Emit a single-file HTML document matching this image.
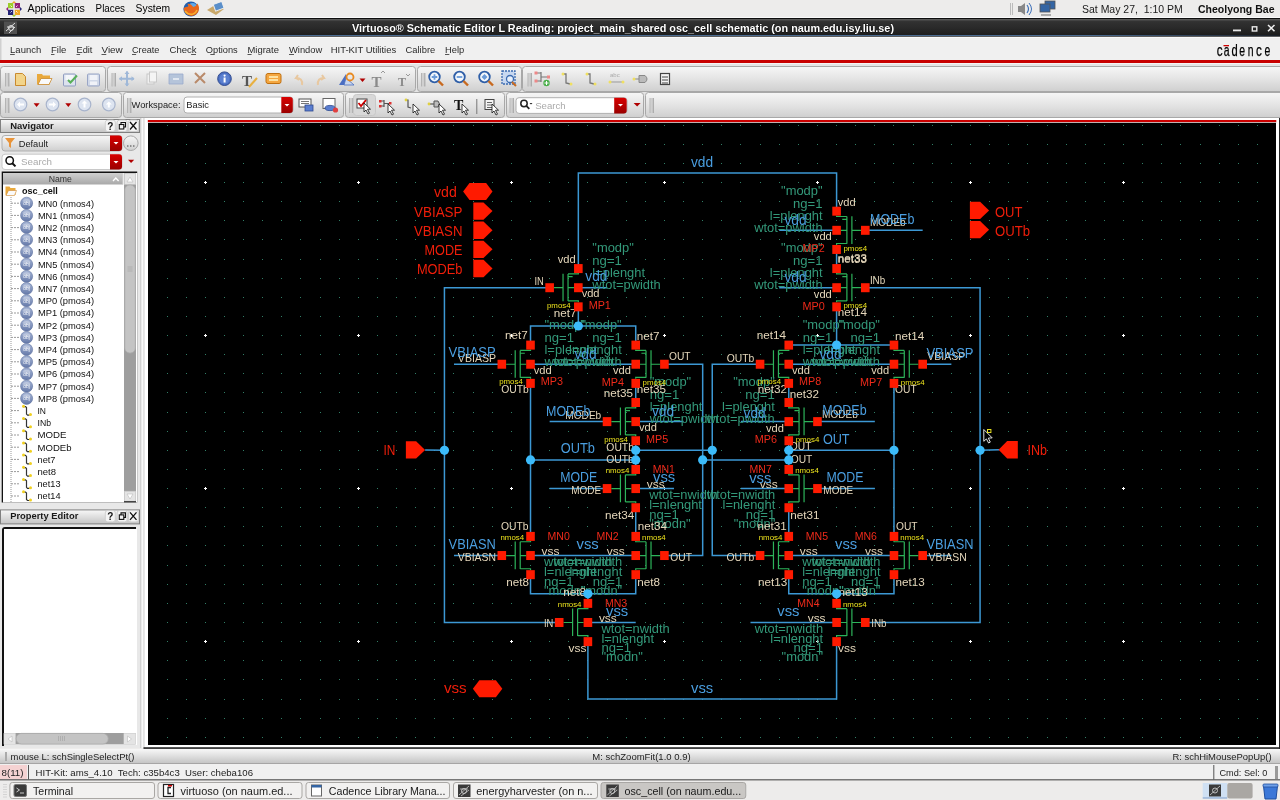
<!DOCTYPE html>
<html><head><meta charset="utf-8"><title>Virtuoso Schematic Editor</title>
<style>html,body{margin:0;padding:0;background:#EDECEB;overflow:hidden}svg{display:block;will-change:transform}text{font-family:"Liberation Sans",sans-serif}</style></head>
<body><svg width="1280" height="800" viewBox="0 0 1280 800">
<rect x="0" y="0" width="1280" height="18" fill="#EDECEB" />
<rect x="0" y="17" width="1280" height="1" fill="#FAFAFA" />
<g transform="translate(14,9)"><path d="M0,-8 l2.2,2.2 h-4.4z" fill="#EFA724"/><path d="M0,8 l2.2,-2.2 h-4.4z" fill="#9CCD2A"/><path d="M-8,0 l2.2,2.2 v-4.4z" fill="#932279"/><path d="M8,0 l-2.2,2.2 v-4.4z" fill="#262577"/><rect x="-6" y="-6" width="5.2" height="5.2" fill="#9CCD2A"/><rect x="0.8" y="-6" width="5.2" height="5.2" fill="#932279"/><rect x="0.8" y="0.8" width="5.2" height="5.2" fill="#EFA724"/><rect x="-6" y="0.8" width="5.2" height="5.2" fill="#262577"/><path d="M-3.5,-3.5 l1.5,1.5 M3.5,-3.5 l-1.5,1.5 M3.5,3.5 l-1.5,-1.5 M-3.5,3.5 l1.5,-1.5" stroke="#fff" stroke-width="0.8"/></g>
<text x="27.6" y="12" font-size="10" fill="#000" textLength="57.30" lengthAdjust="spacingAndGlyphs"  style="white-space:pre">Applications</text>
<text x="95.6" y="12" font-size="10" fill="#000" textLength="29.40" lengthAdjust="spacingAndGlyphs"  style="white-space:pre">Places</text>
<text x="135.6" y="12" font-size="10" fill="#000" textLength="34.40" lengthAdjust="spacingAndGlyphs"  style="white-space:pre">System</text>
<circle cx="191" cy="9" r="7.6" fill="#1F5FB0"/><circle cx="192.5" cy="7.5" r="4.5" fill="#5FA8E8"/><path d="M183.8,8 a7.6,7.6 0 1 0 13.5,-4.5 q-1,3 -4,3.5 q-3,-4 -6,-3 q1.5,1 1,2.5 q-3,0 -4.5,1.5z" fill="#E8661A"/><path d="M185,11 q3,4 8,3 q3,-1 4,-4" stroke="#F8B030" stroke-width="1.5" fill="none"/>
<path d="M207,10 L215,5 L224,9 L216,15 Z" fill="#C9A86A"/><rect x="214" y="3" width="9" height="7" fill="#5B8FC9" stroke="#eee" stroke-width="1" transform="rotate(-20 218 6)"/>
<rect x="1010" y="3" width="1" height="12" fill="#bbb"/><rect x="1012" y="3" width="1" height="12" fill="#bbb"/>
<path d="M1018,6 h3 l4,-3 v12 l-4,-3 h-3z" fill="#888"/><path d="M1027,5 q3,4 0,8" stroke="#3D6FB8" fill="none" stroke-width="1.2"/><path d="M1029,3 q5,6 0,12" stroke="#3D6FB8" fill="none" stroke-width="1"/>
<rect x="1045" y="1" width="10" height="8" fill="#3465A4" stroke="#555" stroke-width="0.8"/><rect x="1040" y="4" width="10" height="8" fill="#3465A4" stroke="#555" stroke-width="0.8"/><rect x="1041" y="14" width="10" height="2" fill="#aaa"/>
<text x="1082" y="12.5" font-size="10" fill="#1a1a1a" textLength="100.70" lengthAdjust="spacingAndGlyphs"  style="white-space:pre">Sat May 27,  1:10 PM</text>
<text x="1198" y="12.5" font-size="10" fill="#111" font-weight="bold" textLength="76.50" lengthAdjust="spacingAndGlyphs"  style="white-space:pre">Cheolyong Bae</text>
<defs><linearGradient id="gTitle" x1="0" y1="0" x2="0" y2="1"><stop offset="0" stop-color="#343434"/><stop offset="0.5" stop-color="#2a2a2a"/><stop offset="1" stop-color="#1c1c1c"/></linearGradient><linearGradient id="gBlue" x1="0" y1="0" x2="1" y2="0"><stop offset="0" stop-color="#1a1f28"/><stop offset="0.15" stop-color="#4A6B91"/><stop offset="0.85" stop-color="#4A6B91"/><stop offset="1" stop-color="#1a1f28"/></linearGradient></defs>
<rect x="0" y="18" width="1280" height="1.5" fill="#0e0e0e" />
<rect x="0" y="19.5" width="1280" height="16" fill="url(#gTitle)" />
<rect x="0" y="20.3" width="1280" height="0.8" fill="#4a4a4a" />
<rect x="0" y="35" width="1280" height="1" fill="url(#gBlue)" />
<rect x="0" y="36" width="1280" height="0.8" fill="#0a0a0a" />
<rect x="0" y="36.8" width="1280" height="1.5" fill="#FAFAFA" />
<rect x="4" y="21.5" width="13" height="12.5" fill="#505050" />
<path d="M6,31 L15,23 M7,27 l7,0 M9,33 l6,-6" stroke="#ddd" stroke-width="1" fill="none"/><circle cx="11" cy="28" r="2.5" stroke="#ddd" fill="none" stroke-width="1"/>
<text x="352" y="32" font-size="11" fill="#FFFFFF" font-weight="bold" textLength="542.00" lengthAdjust="spacingAndGlyphs" stroke="#000" stroke-width="0.6" paint-order="stroke" style="white-space:pre">Virtuoso® Schematic Editor L Reading: project_main_shared osc_cell schematic (on naum.edu.isy.liu.se)</text>
<rect x="1233" y="29.5" width="8" height="1.8" fill="#e8e8e8" />
<rect x="1252.3" y="26.8" width="4.5" height="4.2" fill="none" stroke="#e8e8e8" stroke-width="1.4"/>
<path d="M1268,25 l6.5,6.2 M1274.5,25 l-6.5,6.2" stroke="#f0f0f0" stroke-width="1.5"/>
<rect x="0" y="38.3" width="1280" height="21.7" fill="#F0F0F0" />
<rect x="0" y="38.3" width="1.5" height="21.7" fill="#D0D0D0" />
<text x="10.1" y="52.7" font-size="9.5" fill="#2a2a2a" textLength="31.10" lengthAdjust="spacingAndGlyphs"  style="white-space:pre">Launch</text>
<text x="51" y="52.7" font-size="9.5" fill="#2a2a2a" textLength="15.40" lengthAdjust="spacingAndGlyphs"  style="white-space:pre">File</text>
<text x="76.5" y="52.7" font-size="9.5" fill="#2a2a2a" textLength="15.90" lengthAdjust="spacingAndGlyphs"  style="white-space:pre">Edit</text>
<text x="101.5" y="52.7" font-size="9.5" fill="#2a2a2a" textLength="21.20" lengthAdjust="spacingAndGlyphs"  style="white-space:pre">View</text>
<text x="132" y="52.7" font-size="9.5" fill="#2a2a2a" textLength="27.40" lengthAdjust="spacingAndGlyphs"  style="white-space:pre">Create</text>
<text x="169.5" y="52.7" font-size="9.5" fill="#2a2a2a" textLength="27.00" lengthAdjust="spacingAndGlyphs"  style="white-space:pre">Check</text>
<text x="205.8" y="52.7" font-size="9.5" fill="#2a2a2a" textLength="31.90" lengthAdjust="spacingAndGlyphs"  style="white-space:pre">Options</text>
<text x="247.5" y="52.7" font-size="9.5" fill="#2a2a2a" textLength="31.40" lengthAdjust="spacingAndGlyphs"  style="white-space:pre">Migrate</text>
<text x="289" y="52.7" font-size="9.5" fill="#2a2a2a" textLength="33.20" lengthAdjust="spacingAndGlyphs"  style="white-space:pre">Window</text>
<text x="330.7" y="52.7" font-size="9.5" fill="#2a2a2a" textLength="65.50" lengthAdjust="spacingAndGlyphs"  style="white-space:pre">HIT-KIT Utilities</text>
<text x="405.6" y="52.7" font-size="9.5" fill="#2a2a2a" textLength="29.60" lengthAdjust="spacingAndGlyphs"  style="white-space:pre">Calibre</text>
<text x="445" y="52.7" font-size="9.5" fill="#2a2a2a" textLength="19.20" lengthAdjust="spacingAndGlyphs"  style="white-space:pre">Help</text>
<rect x="10.1" y="54" width="4.665" height="1" fill="#555" />
<rect x="51.0" y="54" width="3.465000000000001" height="1" fill="#555" />
<rect x="76.5" y="54" width="3.5775000000000015" height="1" fill="#555" />
<rect x="101.5" y="54" width="4.7700000000000005" height="1" fill="#555" />
<rect x="132.0" y="54" width="4.11" height="1" fill="#555" />
<rect x="191.1" y="54" width="4.86" height="1" fill="#555" />
<rect x="210.35714285714286" y="54" width="4.101428571428569" height="1" fill="#555" />
<rect x="247.5" y="54" width="4.037142857142854" height="1" fill="#555" />
<rect x="289.0" y="54" width="4.979999999999999" height="1" fill="#555" />
<rect x="445.0" y="54" width="4.319999999999998" height="1" fill="#555" />
<text x="1216.7" y="55.8" font-size="16" fill="#000" textLength="5.80" lengthAdjust="spacingAndGlyphs" stroke="#000" stroke-width="0.25" style="white-space:pre">c</text>
<text x="1223.8" y="55.8" font-size="16" fill="#000" textLength="5.80" lengthAdjust="spacingAndGlyphs" stroke="#000" stroke-width="0.25" style="white-space:pre">a</text>
<text x="1231.5" y="55.8" font-size="16" fill="#000" textLength="6.20" lengthAdjust="spacingAndGlyphs" stroke="#000" stroke-width="0.25" style="white-space:pre">d</text>
<text x="1239.2" y="55.8" font-size="16" fill="#000" textLength="5.80" lengthAdjust="spacingAndGlyphs" stroke="#000" stroke-width="0.25" style="white-space:pre">e</text>
<text x="1247.7" y="55.8" font-size="16" fill="#000" textLength="5.80" lengthAdjust="spacingAndGlyphs" stroke="#000" stroke-width="0.25" style="white-space:pre">n</text>
<text x="1256" y="55.8" font-size="16" fill="#000" textLength="5.80" lengthAdjust="spacingAndGlyphs" stroke="#000" stroke-width="0.25" style="white-space:pre">c</text>
<text x="1264.6" y="55.8" font-size="16" fill="#000" textLength="5.80" lengthAdjust="spacingAndGlyphs" stroke="#000" stroke-width="0.25" style="white-space:pre">e</text>
<rect x="1223.5" y="45" width="5.5" height="1.3" fill="#C00" />
<rect x="0" y="60" width="1280" height="3" fill="#C80000" />
<rect x="0" y="63" width="1280" height="1" fill="#F4F4F4" />
<defs><linearGradient id="gTB" x1="0" y1="0" x2="0" y2="1"><stop offset="0" stop-color="#F6F6F6"/><stop offset="0.45" stop-color="#E6E6E6"/><stop offset="1" stop-color="#CFCFCF"/></linearGradient><linearGradient id="gHdr" x1="0" y1="0" x2="0" y2="1"><stop offset="0" stop-color="#F8F8F8"/><stop offset="1" stop-color="#C4C4C4"/></linearGradient><linearGradient id="gGray" x1="0" y1="0" x2="0" y2="1"><stop offset="0" stop-color="#CFCFCF"/><stop offset="1" stop-color="#A9A9A9"/></linearGradient><linearGradient id="gRed" x1="0" y1="0" x2="0" y2="1"><stop offset="0" stop-color="#D80000"/><stop offset="1" stop-color="#9A0000"/></linearGradient><linearGradient id="gBall" x1="0" y1="0" x2="0" y2="1"><stop offset="0" stop-color="#A9B8D8"/><stop offset="1" stop-color="#6478A8"/></linearGradient></defs>
<rect x="0" y="64" width="1280" height="55" fill="#E4E4E4" />
<rect x="0.5" y="66.5" width="105" height="25" rx="3" fill="url(#gTB)" stroke="#A8A8A8" stroke-width="1"/>
<rect x="107.5" y="66.5" width="308" height="25" rx="3" fill="url(#gTB)" stroke="#A8A8A8" stroke-width="1"/>
<rect x="417.5" y="66.5" width="104" height="25" rx="3" fill="url(#gTB)" stroke="#A8A8A8" stroke-width="1"/>
<rect x="522.5" y="66.5" width="767" height="25" rx="3" fill="url(#gTB)" stroke="#A8A8A8" stroke-width="1"/>
<rect x="0.5" y="92.5" width="121" height="25" rx="3" fill="url(#gTB)" stroke="#A8A8A8" stroke-width="1"/>
<rect x="123.5" y="92.5" width="220" height="25" rx="3" fill="url(#gTB)" stroke="#A8A8A8" stroke-width="1"/>
<rect x="345.5" y="92.5" width="159" height="25" rx="3" fill="url(#gTB)" stroke="#A8A8A8" stroke-width="1"/>
<rect x="506.5" y="92.5" width="137" height="25" rx="3" fill="url(#gTB)" stroke="#A8A8A8" stroke-width="1"/>
<rect x="645.5" y="92.5" width="644" height="25" rx="3" fill="url(#gTB)" stroke="#A8A8A8" stroke-width="1"/>
<rect x="5" y="73" width="1.2" height="13.5" fill="#B4B4B4" /><rect x="6.2" y="73" width="2" height="13.5" fill="#CFCFCF" /><rect x="8.2" y="73" width="1.2" height="13.5" fill="#A8A8A8" />
<rect x="111.5" y="73" width="1.2" height="13.5" fill="#B4B4B4" /><rect x="112.7" y="73" width="2" height="13.5" fill="#CFCFCF" /><rect x="114.7" y="73" width="1.2" height="13.5" fill="#A8A8A8" />
<rect x="421" y="73" width="1.2" height="13.5" fill="#B4B4B4" /><rect x="422.2" y="73" width="2" height="13.5" fill="#CFCFCF" /><rect x="424.2" y="73" width="1.2" height="13.5" fill="#A8A8A8" />
<rect x="527.5" y="73" width="1.2" height="13.5" fill="#B4B4B4" /><rect x="528.7" y="73" width="2" height="13.5" fill="#CFCFCF" /><rect x="530.7" y="73" width="1.2" height="13.5" fill="#A8A8A8" />
<rect x="5" y="98" width="1.2" height="15" fill="#B4B4B4" /><rect x="6.2" y="98" width="2" height="15" fill="#CFCFCF" /><rect x="8.2" y="98" width="1.2" height="15" fill="#A8A8A8" />
<rect x="127" y="98" width="1.2" height="15" fill="#B4B4B4" /><rect x="128.2" y="98" width="2" height="15" fill="#CFCFCF" /><rect x="130.2" y="98" width="1.2" height="15" fill="#A8A8A8" />
<rect x="349" y="98" width="1.2" height="15" fill="#B4B4B4" /><rect x="350.2" y="98" width="2" height="15" fill="#CFCFCF" /><rect x="352.2" y="98" width="1.2" height="15" fill="#A8A8A8" />
<rect x="509.5" y="98" width="1.2" height="15" fill="#B4B4B4" /><rect x="510.7" y="98" width="2" height="15" fill="#CFCFCF" /><rect x="512.7" y="98" width="1.2" height="15" fill="#A8A8A8" />
<rect x="649.5" y="98" width="1.2" height="15" fill="#B4B4B4" /><rect x="650.7" y="98" width="2" height="15" fill="#CFCFCF" /><rect x="652.7" y="98" width="1.2" height="15" fill="#A8A8A8" />
<path d="M15.5,73.5 h7 l3,3 v9 h-10z" fill="#F2D48A" stroke="#C98A2E" stroke-width="1"/>
<path d="M37,74 h5 l1,1.5 h7 v9 h-13z" fill="#E9A93C"/><path d="M38,84.5 l3,-6 h11 l-3,6z" fill="#FAFAFA" stroke="#C98A2E" stroke-width="0.8"/>
<rect x="63.5" y="74" width="12" height="12" rx="1" fill="#DCE2EE" stroke="#8F9CC0"/><rect x="65.5" y="75" width="8" height="5" fill="#F4F6FA"/><path d="M68,80 l2.5,2.5 l6.5,-7" stroke="#58B058" stroke-width="2" fill="none"/>
<rect x="87.5" y="74" width="12" height="12" rx="1" fill="#D0D8E8" stroke="#9AA6C6"/><rect x="89.5" y="75" width="8" height="5" fill="#F0F2F8"/><rect x="90" y="81.5" width="7" height="3.5" fill="#F0F2F8"/>
<path d="M127,71.5 v14.5 M119.5,78.7 h14.5" stroke="#9FB8D8" stroke-width="2"/><path d="M127,71 l-2.5,3 h5z M127,86.5 l-2.5,-3 h5z M119,78.7 l3,-2.5 v5z M134.5,78.7 l-3,-2.5 v5z" fill="#9FB8D8"/>
<rect x="147" y="74" width="7" height="10" fill="#F0F0F0" stroke="#C8C8C8"/><rect x="149.5" y="72" width="7" height="10" fill="#F4F4F4" stroke="#C8C8C8"/>
<path d="M169,74 h14 v10 h-14z" fill="#B5C4DA" stroke="#9AAACC" stroke-width="0.8"/><path d="M173,79 h6" stroke="#fff" stroke-width="1.2"/>
<path d="M195,73 l10,10 M205,73 l-10,10" stroke="#B98A6A" stroke-width="2"/>
<circle cx="224.5" cy="78.7" r="6.8" fill="#4A6EC2" stroke="#2F4A90"/><circle cx="224.5" cy="78.7" r="5" fill="#5C80D0"/><rect x="223.6" y="77.5" width="2" height="5" fill="#fff"/><circle cx="224.6" cy="75.6" r="1.1" fill="#fff"/>
<text x="242" y="86" font-size="15" fill="#555" font-weight="bold"  style="white-space:pre;font-family:&quot;Liberation Serif&quot;">T</text>
<path d="M249,87 l8,-9" stroke="#E8B040" stroke-width="2"/>
<rect x="266" y="73.5" width="15" height="10" rx="2" fill="#F4A640" stroke="#C07010"/><path d="M269,77 h9 M278,80 h-9" stroke="#FFF5C0" stroke-width="1.3"/>
<path d="M302,85 q1,-7 -6,-7 l2,-3 M296,78 l3,2" stroke="#E8C8A0" stroke-width="2" fill="none"/>
<path d="M318,85 q-1,-7 6,-7 l-2,-3 M324,78 l-3,2" stroke="#E8C8A0" stroke-width="2" fill="none"/>
<path d="M339,85 l7,-11 v11z" fill="#4A6EC2"/><path d="M344,85 l10,-0 l-8,-7z" fill="#C9D6EE" stroke="#4A6EC2" stroke-width="0.8"/><circle cx="350" cy="77" r="3.5" fill="none" stroke="#E88A20" stroke-width="1.8"/>
<path d="M359.5,78.5 h6 l-3,3.5z" fill="#B00000"/>
<text x="371.5" y="86.5" font-size="15" fill="#8A8A8A" font-weight="bold"  style="white-space:pre;font-family:&quot;Liberation Serif&quot;">T</text>
<path d="M381,73 l2,-2 l2,2" stroke="#999" fill="none"/>
<text x="398" y="86" font-size="12" fill="#8A8A8A" font-weight="bold"  style="white-space:pre;font-family:&quot;Liberation Serif&quot;">T</text>
<path d="M406,74 l2,2 l2,-2" stroke="#999" fill="none"/>
<circle cx="434.5" cy="77" r="5.3" fill="#F4F8FC" stroke="#2F5FA8" stroke-width="1.8"/><path d="M438.5,81 l4.5,4.5" stroke="#C86A20" stroke-width="2.4"/>
<path d="M431.7,77 h5.6 M434.5,74.2 v5.6" stroke="#6A9AD8" stroke-width="1.8"/>
<circle cx="459.5" cy="77" r="5.3" fill="#F4F8FC" stroke="#2F5FA8" stroke-width="1.8"/><path d="M463.5,81 l4.5,4.5" stroke="#C86A20" stroke-width="2.4"/>
<path d="M456.7,77 h5.6" stroke="#6A9AD8" stroke-width="1.8"/>
<circle cx="484.5" cy="77" r="5.3" fill="#F4F8FC" stroke="#2F5FA8" stroke-width="1.8"/><path d="M488.5,81 l4.5,4.5" stroke="#C86A20" stroke-width="2.4"/>
<path d="M484.5,74 l3,3 l-3,3 l-3,-3z" fill="#6A9AD8"/>
<rect x="502" y="71" width="13" height="13" fill="#C8D8F0" stroke="#3A6AB0" stroke-width="1.3" stroke-dasharray="2,1"/><circle cx="510" cy="79" r="3.5" fill="#E8F0FA" stroke="#3A6AB0" stroke-width="1.3"/><path d="M512,82 l4,4" stroke="#C86A20" stroke-width="2"/>
<path d="M535,73 h6 M535,81 h6 M541,72 v10 M541,77 h7" stroke="#777" stroke-width="1.2" fill="none"/><rect x="534.5" y="71.5" width="3" height="3" fill="#E88"/><rect x="534.5" y="79.5" width="3" height="3" fill="#E88"/><rect x="547" y="75.5" width="3" height="3" fill="#E88"/><circle cx="546.5" cy="83" r="3.2" fill="#4CB04C"/><path d="M546.5,81 v4 M544.5,83 h4" stroke="#fff" stroke-width="1"/>
<path d="M563,74 h3 v9 l4,1" stroke="#777" stroke-width="1.3" fill="none"/><circle cx="563" cy="74" r="1.5" fill="#F0E060"/><circle cx="571" cy="84" r="1.5" fill="#F0E060"/>
<path d="M587,74 h3 v9 l4,1" stroke="#777" stroke-width="1.3" fill="none"/><circle cx="587" cy="74" r="1.5" fill="#F0E060"/><circle cx="595" cy="84" r="1.5" fill="#F0E060"/>
<text x="610" y="77" font-size="6" fill="#AAA"  style="white-space:pre">abc</text>
<path d="M610,82 h13" stroke="#999" stroke-width="1"/><circle cx="610" cy="82" r="1.5" fill="#F0E060"/><circle cx="623" cy="82" r="1.5" fill="#F0E060"/>
<path d="M634,79 h5 M639,75.5 h6 q4,3.5 0,7 h-6z" stroke="#888" stroke-width="1" fill="#BBB"/><circle cx="634" cy="79" r="1.5" fill="#F0E060"/>
<rect x="660.5" y="73.5" width="9" height="11" fill="#F4F4F4" stroke="#444" stroke-width="1.2"/><path d="M662,77 h6 M662,80 h6 M662,83 h6" stroke="#444" stroke-width="1"/>
<circle cx="20.5" cy="104.5" r="6.3" fill="#DDE4F0" stroke="#A8B4CC" stroke-width="1.2"/>
<circle cx="52.5" cy="104.5" r="6.3" fill="#DDE4F0" stroke="#A8B4CC" stroke-width="1.2"/>
<circle cx="84.5" cy="104.5" r="6.3" fill="#DDE4F0" stroke="#A8B4CC" stroke-width="1.2"/>
<circle cx="108.8" cy="104.5" r="6.3" fill="#DDE4F0" stroke="#A8B4CC" stroke-width="1.2"/>
<path d="M17,104.5 l3,-3 v2 h4 v2 h-4 v2z" fill="#fff"/><path d="M56,104.5 l-3,-3 v2 h-4 v2 h4 v2z" fill="#fff"/><path d="M84.5,100.5 l3,3 h-2 v4 h-2 v-4 h-2z" fill="#fff"/><path d="M108.8,101.5 l3,3 h-2 v3 h-2 v-3 h-2z" fill="#fff"/>
<path d="M33.6,103.3 h6 l-3,3.6z" fill="#B00000"/>
<path d="M65.3,103.3 h6 l-3,3.6z" fill="#B00000"/>
<text x="131.6" y="108" font-size="9.5" fill="#222" textLength="48.90" lengthAdjust="spacingAndGlyphs"  style="white-space:pre">Workspace:</text>
<rect x="184" y="97" width="109" height="16" rx="3" fill="#fff" stroke="#B0B0B0"/>
<path d="M281.3,97 h8.5 a3,3 0 0 1 3,3 v10 a3,3 0 0 1 -3,3 h-8.5z" fill="url(#gRed)"/><path d="M284.5,104 h5 l-2.5,2.5z" fill="#fff"/>
<text x="186.3" y="108" font-size="9.5" fill="#222" textLength="22.70" lengthAdjust="spacingAndGlyphs"  style="white-space:pre">Basic</text>
<rect x="299" y="99" width="12" height="8" fill="#fff" stroke="#555" stroke-width="1"/><path d="M301,101.5 h8 M301,103.5 h8" stroke="#555" stroke-width="0.8"/><rect x="305" y="105" width="8" height="6" fill="#5A7ED0" stroke="#2F4A90" stroke-width="0.8"/>
<rect x="323" y="98.5" width="12" height="10" fill="#fff" stroke="#666" stroke-width="1"/><ellipse cx="330" cy="108" rx="5" ry="2.6" fill="#5A7ED0" stroke="#2F4A90" stroke-width="0.8"/><circle cx="335.5" cy="110" r="2.6" fill="#E04040"/>
<rect x="353.5" y="94.5" width="22" height="21" rx="3" fill="#D8D8D8" stroke="#C8C8C8"/>
<rect x="357" y="99" width="10" height="9" fill="#fff" stroke="#444" stroke-width="1"/><path d="M358.5,103 l2.5,3 l5,-6" stroke="#D00000" stroke-width="1.8" fill="none"/>
<path d="M364,103 v9 l2,-2 l2,4 l1.5,-0.8 l-2,-4 h3z" fill="#fff" stroke="#111" stroke-width="0.8"/>
<path d="M380,101 h4 M380,106 h4 M384,100 v7 M384,103.5 h5" stroke="#555" stroke-width="1.2" fill="none"/><rect x="379" y="100" width="2.5" height="2.5" fill="#D33"/><rect x="379" y="105" width="2.5" height="2.5" fill="#D33"/><rect x="389" y="102" width="2.5" height="2.5" fill="#D33"/><path d="M388,104 v9 l2,-2 l2,4 l1.5,-0.8 l-2,-4 h3z" fill="#fff" stroke="#111" stroke-width="0.8"/>
<path d="M406,100 h2 v7 l3,1" stroke="#555" stroke-width="1.2" fill="none"/><circle cx="406" cy="100" r="1.4" fill="#E0D040"/><path d="M413,104 v9 l2,-2 l2,4 l1.5,-0.8 l-2,-4 h3z" fill="#fff" stroke="#111" stroke-width="0.8"/>
<path d="M429,104 h5" stroke="#555" stroke-width="1.2"/><circle cx="429" cy="104" r="1.4" fill="#E0D040"/><path d="M434,101 h4 q3,3 0,6 h-4z" fill="#bbb" stroke="#555" stroke-width="1"/><path d="M439,104 v9 l2,-2 l2,4 l1.5,-0.8 l-2,-4 h3z" fill="#fff" stroke="#111" stroke-width="0.8"/>
<text x="454" y="110" font-size="14" fill="#111" font-weight="bold"  style="white-space:pre;font-family:&quot;Liberation Serif&quot;">T</text><path d="M462,104 v9 l2,-2 l2,4 l1.5,-0.8 l-2,-4 h3z" fill="#fff" stroke="#111" stroke-width="0.8"/>
<rect x="476.3" y="99" width="1" height="15" fill="#777" />
<rect x="485" y="99.5" width="9" height="10" fill="#F4F4F4" stroke="#444" stroke-width="1"/><path d="M487,102.5 h5 M487,105 h5 M487,107.5 h5" stroke="#444" stroke-width="0.8"/><path d="M492,104 v9 l2,-2 l2,4 l1.5,-0.8 l-2,-4 h3z" fill="#fff" stroke="#111" stroke-width="0.8"/>
<rect x="516" y="97.7" width="111" height="15.7" rx="3" fill="#fff" stroke="#B0B0B0"/>
<path d="M614.2,97.7 h9.5 a3,3 0 0 1 3,3 v9.7 a3,3 0 0 1 -3,3 h-9.5z" fill="url(#gRed)"/><path d="M618,104 h5 l-2.5,2.5z" fill="#fff"/>
<circle cx="524" cy="103.5" r="3.2" fill="none" stroke="#222" stroke-width="1.5"/><path d="M526.3,105.8 l3,3" stroke="#222" stroke-width="1.8"/><path d="M529.5,103 h3 l-1.5,1.5z" fill="#222"/>
<text x="535.2" y="108.5" font-size="9.5" fill="#AAAAAA" textLength="30.50" lengthAdjust="spacingAndGlyphs"  style="white-space:pre">Search</text>
<path d="M633.6,103 h7 l-3.5,3.5z" fill="#B00000"/>
<rect x="0" y="118" width="144" height="630" fill="#E8E8E8" />
<rect x="140" y="118" width="1" height="630" fill="#D0D0D0" />
<rect x="142" y="118" width="1" height="630" fill="#F8F8F8" />
<rect x="0.5" y="119.5" width="139" height="13" fill="url(#gHdr)" stroke="#808080"/>
<text x="10.2" y="128.8" font-size="9.5" fill="#1a1a1a" font-weight="bold" textLength="43.60" lengthAdjust="spacingAndGlyphs"  style="white-space:pre">Navigator</text>
<rect x="105.3" y="120" width="10" height="11.5" rx="2.5" fill="#F4F4F4" stroke="#C8C8C8" stroke-width="0.8"/>
<rect x="117.2" y="120" width="10" height="11.5" rx="2.5" fill="#F4F4F4" stroke="#C8C8C8" stroke-width="0.8"/>
<rect x="128.5" y="120" width="10" height="11.5" rx="2.5" fill="#F4F4F4" stroke="#C8C8C8" stroke-width="0.8"/>
<text x="107.2" y="129.5" font-size="10" fill="#111" font-weight="bold"  style="white-space:pre">?</text>
<rect x="119.3" y="124.5" width="4.5" height="4.5" fill="none" stroke="#111" stroke-width="1.1"/><path d="M121,124.5 v-2 h4.5 v4.5 h-1.7" stroke="#111" stroke-width="1.1" fill="none"/>
<path d="M130,122 l6.5,7.5 M136.5,122 l-6.5,7.5" stroke="#111" stroke-width="1.3"/>
<rect x="2" y="135.5" width="120" height="15.5" rx="3" fill="url(#gTB)" stroke="#B0B0B0"/>
<path d="M110,135.5 h9 a3,3 0 0 1 3,3 v9.5 a3,3 0 0 1 -3,3 h-9z" fill="url(#gRed)"/><path d="M113.5,142 h5 l-2.5,2.5z" fill="#fff"/>
<path d="M5,138 h10 l-4,5 v5 l-2,-1.5 v-3.5z" fill="#E8943A"/>
<text x="18.7" y="146.5" font-size="9.5" fill="#222" textLength="29.40" lengthAdjust="spacingAndGlyphs"  style="white-space:pre">Default</text>
<circle cx="130.8" cy="143.2" r="7.3" fill="url(#gTB)" stroke="#A8A8A8"/>
<circle cx="127.8" cy="146" r="0.8" fill="#555"/><circle cx="130.8" cy="146" r="0.8" fill="#555"/><circle cx="133.8" cy="146" r="0.8" fill="#555"/>
<rect x="2" y="154.2" width="120" height="15.3" rx="3" fill="#fff" stroke="#C8C8C8"/>
<path d="M110,154.2 h9 a3,3 0 0 1 3,3 v9.3 a3,3 0 0 1 -3,3 h-9z" fill="url(#gRed)"/><path d="M113.5,161 h5 l-2.5,2.5z" fill="#fff"/>
<circle cx="9.7" cy="160.5" r="3.7" fill="none" stroke="#111" stroke-width="1.5"/><path d="M12.3,163.2 l3.2,3.2" stroke="#111" stroke-width="2"/>
<text x="21" y="165" font-size="9.5" fill="#AAAAAA" textLength="31.00" lengthAdjust="spacingAndGlyphs"  style="white-space:pre">Search</text>
<path d="M128,159.7 h6.2 l-3.1,3.4z" fill="#B00000"/>
<rect x="1.7" y="171.5" width="135.5" height="331" fill="#111" />
<rect x="3" y="173" width="134.2" height="329.5" fill="#FFFFFF" />
<rect x="3" y="173" width="120" height="11.5" fill="url(#gGray)"/>
<rect x="122.5" y="173" width="1" height="11.5" fill="#D8D8D8" />
<text x="48.7" y="182.3" font-size="9" fill="#333" textLength="23.20" lengthAdjust="spacingAndGlyphs"  style="white-space:pre">Name</text>
<path d="M113,181 l2.8,-3 l2.8,3" stroke="#fff" stroke-width="1.3" fill="none"/>
<rect x="124" y="173" width="12" height="329" fill="#9E9E9E" />
<rect x="124.3" y="173.3" width="11.5" height="11" fill="#E4E4E4" stroke="#C8C8C8" stroke-width="0.6"/><path d="M127,182 l3,-5 l3,5z" fill="#fff" stroke="#bbb" stroke-width="0.6"/>
<rect x="124.8" y="185" width="10.5" height="168" rx="5" fill="#C4C4C4" stroke="#ADADAD" stroke-width="0.8"/>
<path d="M127.5,267 h5 M127.5,269 h5 M127.5,271 h5" stroke="#AAA" stroke-width="0.8"/>
<rect x="124.3" y="491.2" width="11.5" height="10" fill="#E4E4E4" stroke="#C8C8C8" stroke-width="0.6"/><path d="M127,494 l3,5 l3,-5z" fill="#fff" stroke="#bbb" stroke-width="0.6"/>
<rect x="124" y="501" width="12" height="1.5" fill="#444" />
<path d="M5.5,186.5 h4 l1,1.5 h5 v7 h-10z" fill="#E9A93C"/><path d="M6,195.5 l2.5,-5 h8 l-2,5z" fill="#FAFAFA" stroke="#D08A30" stroke-width="0.6"/>
<text x="22" y="193.7" font-size="9.5" fill="#111" font-weight="bold" textLength="35.80" lengthAdjust="spacingAndGlyphs"  style="white-space:pre">osc_cell</text>
<path d="M11,197 V502" stroke="#999" stroke-width="1" stroke-dasharray="1,1"/>
<path d="M11,203.2 h8" stroke="#999" stroke-width="1" stroke-dasharray="2,1"/>
<circle cx="26.6" cy="203.2" r="6" fill="url(#gBall)" stroke="#5A6E9E" stroke-width="0.6"/>
<ellipse cx="26.6" cy="201.0" rx="3.5" ry="2" fill="#fff" opacity="0.35"/>
<text x="23.3" y="205.0" font-size="4.5" fill="#F4F6FA" textLength="6.60" lengthAdjust="spacingAndGlyphs"  style="white-space:pre">obj</text>
<text x="37.9" y="206.6" font-size="9" fill="#111" textLength="56.10" lengthAdjust="spacingAndGlyphs"  style="white-space:pre">MN0 (nmos4)</text>
<path d="M11,215.4 h8" stroke="#999" stroke-width="1" stroke-dasharray="2,1"/>
<circle cx="26.6" cy="215.4" r="6" fill="url(#gBall)" stroke="#5A6E9E" stroke-width="0.6"/>
<ellipse cx="26.6" cy="213.2" rx="3.5" ry="2" fill="#fff" opacity="0.35"/>
<text x="23.3" y="217.2" font-size="4.5" fill="#F4F6FA" textLength="6.60" lengthAdjust="spacingAndGlyphs"  style="white-space:pre">obj</text>
<text x="37.9" y="218.79999999999998" font-size="9" fill="#111" textLength="56.10" lengthAdjust="spacingAndGlyphs"  style="white-space:pre">MN1 (nmos4)</text>
<path d="M11,227.6 h8" stroke="#999" stroke-width="1" stroke-dasharray="2,1"/>
<circle cx="26.6" cy="227.6" r="6" fill="url(#gBall)" stroke="#5A6E9E" stroke-width="0.6"/>
<ellipse cx="26.6" cy="225.4" rx="3.5" ry="2" fill="#fff" opacity="0.35"/>
<text x="23.3" y="229.39999999999998" font-size="4.5" fill="#F4F6FA" textLength="6.60" lengthAdjust="spacingAndGlyphs"  style="white-space:pre">obj</text>
<text x="37.9" y="230.99999999999997" font-size="9" fill="#111" textLength="56.10" lengthAdjust="spacingAndGlyphs"  style="white-space:pre">MN2 (nmos4)</text>
<path d="M11,239.8 h8" stroke="#999" stroke-width="1" stroke-dasharray="2,1"/>
<circle cx="26.6" cy="239.8" r="6" fill="url(#gBall)" stroke="#5A6E9E" stroke-width="0.6"/>
<ellipse cx="26.6" cy="237.6" rx="3.5" ry="2" fill="#fff" opacity="0.35"/>
<text x="23.3" y="241.59999999999997" font-size="4.5" fill="#F4F6FA" textLength="6.60" lengthAdjust="spacingAndGlyphs"  style="white-space:pre">obj</text>
<text x="37.9" y="243.19999999999996" font-size="9" fill="#111" textLength="56.10" lengthAdjust="spacingAndGlyphs"  style="white-space:pre">MN3 (nmos4)</text>
<path d="M11,252.0 h8" stroke="#999" stroke-width="1" stroke-dasharray="2,1"/>
<circle cx="26.6" cy="252.0" r="6" fill="url(#gBall)" stroke="#5A6E9E" stroke-width="0.6"/>
<ellipse cx="26.6" cy="249.8" rx="3.5" ry="2" fill="#fff" opacity="0.35"/>
<text x="23.3" y="253.79999999999995" font-size="4.5" fill="#F4F6FA" textLength="6.60" lengthAdjust="spacingAndGlyphs"  style="white-space:pre">obj</text>
<text x="37.9" y="255.39999999999995" font-size="9" fill="#111" textLength="56.10" lengthAdjust="spacingAndGlyphs"  style="white-space:pre">MN4 (nmos4)</text>
<path d="M11,264.2 h8" stroke="#999" stroke-width="1" stroke-dasharray="2,1"/>
<circle cx="26.6" cy="264.2" r="6" fill="url(#gBall)" stroke="#5A6E9E" stroke-width="0.6"/>
<ellipse cx="26.6" cy="262.0" rx="3.5" ry="2" fill="#fff" opacity="0.35"/>
<text x="23.3" y="265.99999999999994" font-size="4.5" fill="#F4F6FA" textLength="6.60" lengthAdjust="spacingAndGlyphs"  style="white-space:pre">obj</text>
<text x="37.9" y="267.5999999999999" font-size="9" fill="#111" textLength="56.10" lengthAdjust="spacingAndGlyphs"  style="white-space:pre">MN5 (nmos4)</text>
<path d="M11,276.4 h8" stroke="#999" stroke-width="1" stroke-dasharray="2,1"/>
<circle cx="26.6" cy="276.4" r="6" fill="url(#gBall)" stroke="#5A6E9E" stroke-width="0.6"/>
<ellipse cx="26.6" cy="274.2" rx="3.5" ry="2" fill="#fff" opacity="0.35"/>
<text x="23.3" y="278.19999999999993" font-size="4.5" fill="#F4F6FA" textLength="6.60" lengthAdjust="spacingAndGlyphs"  style="white-space:pre">obj</text>
<text x="37.9" y="279.7999999999999" font-size="9" fill="#111" textLength="56.10" lengthAdjust="spacingAndGlyphs"  style="white-space:pre">MN6 (nmos4)</text>
<path d="M11,288.6 h8" stroke="#999" stroke-width="1" stroke-dasharray="2,1"/>
<circle cx="26.6" cy="288.6" r="6" fill="url(#gBall)" stroke="#5A6E9E" stroke-width="0.6"/>
<ellipse cx="26.6" cy="286.4" rx="3.5" ry="2" fill="#fff" opacity="0.35"/>
<text x="23.3" y="290.3999999999999" font-size="4.5" fill="#F4F6FA" textLength="6.60" lengthAdjust="spacingAndGlyphs"  style="white-space:pre">obj</text>
<text x="37.9" y="291.9999999999999" font-size="9" fill="#111" textLength="56.10" lengthAdjust="spacingAndGlyphs"  style="white-space:pre">MN7 (nmos4)</text>
<path d="M11,300.8 h8" stroke="#999" stroke-width="1" stroke-dasharray="2,1"/>
<circle cx="26.6" cy="300.8" r="6" fill="url(#gBall)" stroke="#5A6E9E" stroke-width="0.6"/>
<ellipse cx="26.6" cy="298.6" rx="3.5" ry="2" fill="#fff" opacity="0.35"/>
<text x="23.3" y="302.5999999999999" font-size="4.5" fill="#F4F6FA" textLength="6.60" lengthAdjust="spacingAndGlyphs"  style="white-space:pre">obj</text>
<text x="37.9" y="304.1999999999999" font-size="9" fill="#111" textLength="56.10" lengthAdjust="spacingAndGlyphs"  style="white-space:pre">MP0 (pmos4)</text>
<path d="M11,313.0 h8" stroke="#999" stroke-width="1" stroke-dasharray="2,1"/>
<circle cx="26.6" cy="313.0" r="6" fill="url(#gBall)" stroke="#5A6E9E" stroke-width="0.6"/>
<ellipse cx="26.6" cy="310.8" rx="3.5" ry="2" fill="#fff" opacity="0.35"/>
<text x="23.3" y="314.7999999999999" font-size="4.5" fill="#F4F6FA" textLength="6.60" lengthAdjust="spacingAndGlyphs"  style="white-space:pre">obj</text>
<text x="37.9" y="316.39999999999986" font-size="9" fill="#111" textLength="56.10" lengthAdjust="spacingAndGlyphs"  style="white-space:pre">MP1 (pmos4)</text>
<path d="M11,325.2 h8" stroke="#999" stroke-width="1" stroke-dasharray="2,1"/>
<circle cx="26.6" cy="325.2" r="6" fill="url(#gBall)" stroke="#5A6E9E" stroke-width="0.6"/>
<ellipse cx="26.6" cy="323.0" rx="3.5" ry="2" fill="#fff" opacity="0.35"/>
<text x="23.3" y="326.9999999999999" font-size="4.5" fill="#F4F6FA" textLength="6.60" lengthAdjust="spacingAndGlyphs"  style="white-space:pre">obj</text>
<text x="37.9" y="328.59999999999985" font-size="9" fill="#111" textLength="56.10" lengthAdjust="spacingAndGlyphs"  style="white-space:pre">MP2 (pmos4)</text>
<path d="M11,337.4 h8" stroke="#999" stroke-width="1" stroke-dasharray="2,1"/>
<circle cx="26.6" cy="337.4" r="6" fill="url(#gBall)" stroke="#5A6E9E" stroke-width="0.6"/>
<ellipse cx="26.6" cy="335.2" rx="3.5" ry="2" fill="#fff" opacity="0.35"/>
<text x="23.3" y="339.1999999999999" font-size="4.5" fill="#F4F6FA" textLength="6.60" lengthAdjust="spacingAndGlyphs"  style="white-space:pre">obj</text>
<text x="37.9" y="340.79999999999984" font-size="9" fill="#111" textLength="56.10" lengthAdjust="spacingAndGlyphs"  style="white-space:pre">MP3 (pmos4)</text>
<path d="M11,349.6 h8" stroke="#999" stroke-width="1" stroke-dasharray="2,1"/>
<circle cx="26.6" cy="349.6" r="6" fill="url(#gBall)" stroke="#5A6E9E" stroke-width="0.6"/>
<ellipse cx="26.6" cy="347.4" rx="3.5" ry="2" fill="#fff" opacity="0.35"/>
<text x="23.3" y="351.39999999999986" font-size="4.5" fill="#F4F6FA" textLength="6.60" lengthAdjust="spacingAndGlyphs"  style="white-space:pre">obj</text>
<text x="37.9" y="352.99999999999983" font-size="9" fill="#111" textLength="56.10" lengthAdjust="spacingAndGlyphs"  style="white-space:pre">MP4 (pmos4)</text>
<path d="M11,361.8 h8" stroke="#999" stroke-width="1" stroke-dasharray="2,1"/>
<circle cx="26.6" cy="361.8" r="6" fill="url(#gBall)" stroke="#5A6E9E" stroke-width="0.6"/>
<ellipse cx="26.6" cy="359.6" rx="3.5" ry="2" fill="#fff" opacity="0.35"/>
<text x="23.3" y="363.59999999999985" font-size="4.5" fill="#F4F6FA" textLength="6.60" lengthAdjust="spacingAndGlyphs"  style="white-space:pre">obj</text>
<text x="37.9" y="365.1999999999998" font-size="9" fill="#111" textLength="56.10" lengthAdjust="spacingAndGlyphs"  style="white-space:pre">MP5 (pmos4)</text>
<path d="M11,374.0 h8" stroke="#999" stroke-width="1" stroke-dasharray="2,1"/>
<circle cx="26.6" cy="374.0" r="6" fill="url(#gBall)" stroke="#5A6E9E" stroke-width="0.6"/>
<ellipse cx="26.6" cy="371.8" rx="3.5" ry="2" fill="#fff" opacity="0.35"/>
<text x="23.3" y="375.79999999999984" font-size="4.5" fill="#F4F6FA" textLength="6.60" lengthAdjust="spacingAndGlyphs"  style="white-space:pre">obj</text>
<text x="37.9" y="377.3999999999998" font-size="9" fill="#111" textLength="56.10" lengthAdjust="spacingAndGlyphs"  style="white-space:pre">MP6 (pmos4)</text>
<path d="M11,386.2 h8" stroke="#999" stroke-width="1" stroke-dasharray="2,1"/>
<circle cx="26.6" cy="386.2" r="6" fill="url(#gBall)" stroke="#5A6E9E" stroke-width="0.6"/>
<ellipse cx="26.6" cy="384.0" rx="3.5" ry="2" fill="#fff" opacity="0.35"/>
<text x="23.3" y="387.99999999999983" font-size="4.5" fill="#F4F6FA" textLength="6.60" lengthAdjust="spacingAndGlyphs"  style="white-space:pre">obj</text>
<text x="37.9" y="389.5999999999998" font-size="9" fill="#111" textLength="56.10" lengthAdjust="spacingAndGlyphs"  style="white-space:pre">MP7 (pmos4)</text>
<path d="M11,398.4 h8" stroke="#999" stroke-width="1" stroke-dasharray="2,1"/>
<circle cx="26.6" cy="398.4" r="6" fill="url(#gBall)" stroke="#5A6E9E" stroke-width="0.6"/>
<ellipse cx="26.6" cy="396.2" rx="3.5" ry="2" fill="#fff" opacity="0.35"/>
<text x="23.3" y="400.1999999999998" font-size="4.5" fill="#F4F6FA" textLength="6.60" lengthAdjust="spacingAndGlyphs"  style="white-space:pre">obj</text>
<text x="37.9" y="401.7999999999998" font-size="9" fill="#111" textLength="56.10" lengthAdjust="spacingAndGlyphs"  style="white-space:pre">MP8 (pmos4)</text>
<path d="M11,410.6 h8" stroke="#999" stroke-width="1" stroke-dasharray="2,1"/>
<path d="M23,406.6 h2.5 l1,1 v6.5 l1,1 h2" stroke="#333" stroke-width="1.2" fill="none"/><circle cx="23.5" cy="406.3" r="1.5" fill="#F0D020"/><circle cx="30.5" cy="414.6" r="1.5" fill="#F0D020"/>
<text x="37.5" y="413.9999999999998" font-size="9" fill="#111" textLength="8.50" lengthAdjust="spacingAndGlyphs"  style="white-space:pre">IN</text>
<path d="M11,422.8 h8" stroke="#999" stroke-width="1" stroke-dasharray="2,1"/>
<path d="M23,418.8 h2.5 l1,1 v6.5 l1,1 h2" stroke="#333" stroke-width="1.2" fill="none"/><circle cx="23.5" cy="418.5" r="1.5" fill="#F0D020"/><circle cx="30.5" cy="426.8" r="1.5" fill="#F0D020"/>
<text x="37.5" y="426.19999999999976" font-size="9" fill="#111" textLength="13.50" lengthAdjust="spacingAndGlyphs"  style="white-space:pre">INb</text>
<path d="M11,435.0 h8" stroke="#999" stroke-width="1" stroke-dasharray="2,1"/>
<path d="M23,431.0 h2.5 l1,1 v6.5 l1,1 h2" stroke="#333" stroke-width="1.2" fill="none"/><circle cx="23.5" cy="430.7" r="1.5" fill="#F0D020"/><circle cx="30.5" cy="439.0" r="1.5" fill="#F0D020"/>
<text x="37.5" y="438.39999999999975" font-size="9" fill="#111" textLength="29.00" lengthAdjust="spacingAndGlyphs"  style="white-space:pre">MODE</text>
<path d="M11,447.2 h8" stroke="#999" stroke-width="1" stroke-dasharray="2,1"/>
<path d="M23,443.2 h2.5 l1,1 v6.5 l1,1 h2" stroke="#333" stroke-width="1.2" fill="none"/><circle cx="23.5" cy="442.9" r="1.5" fill="#F0D020"/><circle cx="30.5" cy="451.2" r="1.5" fill="#F0D020"/>
<text x="37.5" y="450.59999999999974" font-size="9" fill="#111" textLength="34.00" lengthAdjust="spacingAndGlyphs"  style="white-space:pre">MODEb</text>
<path d="M11,459.4 h8" stroke="#999" stroke-width="1" stroke-dasharray="2,1"/>
<path d="M23,455.4 h2.5 l1,1 v6.5 l1,1 h2" stroke="#333" stroke-width="1.2" fill="none"/><circle cx="23.5" cy="455.1" r="1.5" fill="#F0D020"/><circle cx="30.5" cy="463.4" r="1.5" fill="#F0D020"/>
<text x="37.5" y="462.7999999999997" font-size="9" fill="#111" textLength="18.00" lengthAdjust="spacingAndGlyphs"  style="white-space:pre">net7</text>
<path d="M11,471.6 h8" stroke="#999" stroke-width="1" stroke-dasharray="2,1"/>
<path d="M23,467.6 h2.5 l1,1 v6.5 l1,1 h2" stroke="#333" stroke-width="1.2" fill="none"/><circle cx="23.5" cy="467.3" r="1.5" fill="#F0D020"/><circle cx="30.5" cy="475.6" r="1.5" fill="#F0D020"/>
<text x="37.5" y="474.9999999999997" font-size="9" fill="#111" textLength="18.50" lengthAdjust="spacingAndGlyphs"  style="white-space:pre">net8</text>
<path d="M11,483.8 h8" stroke="#999" stroke-width="1" stroke-dasharray="2,1"/>
<path d="M23,479.8 h2.5 l1,1 v6.5 l1,1 h2" stroke="#333" stroke-width="1.2" fill="none"/><circle cx="23.5" cy="479.5" r="1.5" fill="#F0D020"/><circle cx="30.5" cy="487.8" r="1.5" fill="#F0D020"/>
<text x="37.5" y="487.1999999999997" font-size="9" fill="#111" textLength="23.00" lengthAdjust="spacingAndGlyphs"  style="white-space:pre">net13</text>
<path d="M11,496.0 h8" stroke="#999" stroke-width="1" stroke-dasharray="2,1"/>
<path d="M23,492.0 h2.5 l1,1 v6.5 l1,1 h2" stroke="#333" stroke-width="1.2" fill="none"/><circle cx="23.5" cy="491.7" r="1.5" fill="#F0D020"/><circle cx="30.5" cy="500.0" r="1.5" fill="#F0D020"/>
<text x="37.5" y="499.3999999999997" font-size="9" fill="#111" textLength="23.00" lengthAdjust="spacingAndGlyphs"  style="white-space:pre">net14</text>
<rect x="0" y="503" width="140" height="4" fill="#E8E8E8" />
<rect x="0.5" y="509.9" width="139" height="14.0" fill="url(#gHdr)" stroke="#808080"/>
<text x="10.2" y="519.1999999999999" font-size="9.5" fill="#1a1a1a" font-weight="bold" textLength="68.10" lengthAdjust="spacingAndGlyphs"  style="white-space:pre">Property Editor</text>
<rect x="105.3" y="510.4" width="10" height="11.5" rx="2.5" fill="#F4F4F4" stroke="#C8C8C8" stroke-width="0.8"/>
<rect x="117.2" y="510.4" width="10" height="11.5" rx="2.5" fill="#F4F4F4" stroke="#C8C8C8" stroke-width="0.8"/>
<rect x="128.5" y="510.4" width="10" height="11.5" rx="2.5" fill="#F4F4F4" stroke="#C8C8C8" stroke-width="0.8"/>
<text x="107.2" y="519.9" font-size="10" fill="#111" font-weight="bold"  style="white-space:pre">?</text>
<rect x="119.3" y="514.9" width="4.5" height="4.5" fill="none" stroke="#111" stroke-width="1.1"/><path d="M121,514.9 v-2 h4.5 v4.5 h-1.7" stroke="#111" stroke-width="1.1" fill="none"/>
<path d="M130,512.4 l6.5,7.5 M136.5,512.4 l-6.5,7.5" stroke="#111" stroke-width="1.3"/>
<path d="M2,746 V530 a3,3 0 0 1 3,-3 H136 V529 H4 V746z" fill="#111"/>
<rect x="4" y="529" width="133" height="216" fill="#FFFFFF" />
<rect x="3.7" y="733" width="132" height="11.4" fill="#9E9E9E" />
<rect x="3.8" y="733.2" width="11.8" height="11" fill="#E4E4E4"/><path d="M12,736 l-4,3 l4,3z" fill="#fff" stroke="#bbb" stroke-width="0.6"/>
<rect x="16.2" y="733.4" width="92" height="10.6" rx="5.3" fill="#C4C4C4" stroke="#ADADAD" stroke-width="0.8"/><path d="M58.5,736 v5 M60.5,736 v5 M62.5,736 v5 M64.5,736 v5" stroke="#AAA" stroke-width="0.8"/>
<rect x="123.7" y="733.2" width="12" height="11" fill="#E4E4E4"/><path d="M127.5,736 l4,3 l-4,3z" fill="#fff" stroke="#bbb" stroke-width="0.6"/>
<rect x="143.5" y="118" width="1136.5" height="631" fill="#FFFFFF" />
<rect x="143.5" y="118" width="1" height="631" fill="#D0D0D0" />
<rect x="147.8" y="120" width="1128.5" height="2.3" fill="#CC0000" />
<rect x="148" y="123" width="1128" height="622" fill="#000000" />
<rect x="148" y="122.3" width="1128" height="0.7" fill="#AFAFAF" />
<rect x="143.5" y="747.3" width="1136.5" height="1.5" fill="#111" />
<rect x="1279" y="118" width="1" height="631" fill="#222" />
<svg x="148" y="123" width="1128" height="622" viewBox="148 123 1128 622" overflow="hidden">
<path d="M147,125h1v1h-1zM147,144h1v1h-1zM147,163h1v1h-1zM147,182h1v1h-1zM147,201h1v1h-1zM147,220h1v1h-1zM147,239h1v1h-1zM147,259h1v1h-1zM147,278h1v1h-1zM147,297h1v1h-1zM147,316h1v1h-1zM147,335h1v1h-1zM147,354h1v1h-1zM147,373h1v1h-1zM147,392h1v1h-1zM147,412h1v1h-1zM147,431h1v1h-1zM147,450h1v1h-1zM147,469h1v1h-1zM147,488h1v1h-1zM147,507h1v1h-1zM147,526h1v1h-1zM147,545h1v1h-1zM147,565h1v1h-1zM147,584h1v1h-1zM147,603h1v1h-1zM147,622h1v1h-1zM147,641h1v1h-1zM147,660h1v1h-1zM147,679h1v1h-1zM147,699h1v1h-1zM147,718h1v1h-1zM147,737h1v1h-1zM167,125h1v1h-1zM167,144h1v1h-1zM167,163h1v1h-1zM167,182h1v1h-1zM167,201h1v1h-1zM167,220h1v1h-1zM167,239h1v1h-1zM167,259h1v1h-1zM167,278h1v1h-1zM167,297h1v1h-1zM167,316h1v1h-1zM167,335h1v1h-1zM167,354h1v1h-1zM167,373h1v1h-1zM167,392h1v1h-1zM167,412h1v1h-1zM167,431h1v1h-1zM167,450h1v1h-1zM167,469h1v1h-1zM167,488h1v1h-1zM167,507h1v1h-1zM167,526h1v1h-1zM167,545h1v1h-1zM167,565h1v1h-1zM167,584h1v1h-1zM167,603h1v1h-1zM167,622h1v1h-1zM167,641h1v1h-1zM167,660h1v1h-1zM167,679h1v1h-1zM167,699h1v1h-1zM167,718h1v1h-1zM167,737h1v1h-1zM186,125h1v1h-1zM186,144h1v1h-1zM186,163h1v1h-1zM186,182h1v1h-1zM186,201h1v1h-1zM186,220h1v1h-1zM186,239h1v1h-1zM186,259h1v1h-1zM186,278h1v1h-1zM186,297h1v1h-1zM186,316h1v1h-1zM186,335h1v1h-1zM186,354h1v1h-1zM186,373h1v1h-1zM186,392h1v1h-1zM186,412h1v1h-1zM186,431h1v1h-1zM186,450h1v1h-1zM186,469h1v1h-1zM186,488h1v1h-1zM186,507h1v1h-1zM186,526h1v1h-1zM186,545h1v1h-1zM186,565h1v1h-1zM186,584h1v1h-1zM186,603h1v1h-1zM186,622h1v1h-1zM186,641h1v1h-1zM186,660h1v1h-1zM186,679h1v1h-1zM186,699h1v1h-1zM186,718h1v1h-1zM186,737h1v1h-1zM205,125h1v1h-1zM205,144h1v1h-1zM205,163h1v1h-1zM205,201h1v1h-1zM205,220h1v1h-1zM205,239h1v1h-1zM205,259h1v1h-1zM205,278h1v1h-1zM205,297h1v1h-1zM205,316h1v1h-1zM205,354h1v1h-1zM205,373h1v1h-1zM205,392h1v1h-1zM205,412h1v1h-1zM205,431h1v1h-1zM205,450h1v1h-1zM205,469h1v1h-1zM205,507h1v1h-1zM205,526h1v1h-1zM205,545h1v1h-1zM205,565h1v1h-1zM205,584h1v1h-1zM205,603h1v1h-1zM205,622h1v1h-1zM205,660h1v1h-1zM205,679h1v1h-1zM205,699h1v1h-1zM205,718h1v1h-1zM205,737h1v1h-1zM224,125h1v1h-1zM224,144h1v1h-1zM224,163h1v1h-1zM224,182h1v1h-1zM224,201h1v1h-1zM224,220h1v1h-1zM224,239h1v1h-1zM224,259h1v1h-1zM224,278h1v1h-1zM224,297h1v1h-1zM224,316h1v1h-1zM224,335h1v1h-1zM224,354h1v1h-1zM224,373h1v1h-1zM224,392h1v1h-1zM224,412h1v1h-1zM224,431h1v1h-1zM224,450h1v1h-1zM224,469h1v1h-1zM224,488h1v1h-1zM224,507h1v1h-1zM224,526h1v1h-1zM224,545h1v1h-1zM224,565h1v1h-1zM224,584h1v1h-1zM224,603h1v1h-1zM224,622h1v1h-1zM224,641h1v1h-1zM224,660h1v1h-1zM224,679h1v1h-1zM224,699h1v1h-1zM224,718h1v1h-1zM224,737h1v1h-1zM243,125h1v1h-1zM243,144h1v1h-1zM243,163h1v1h-1zM243,182h1v1h-1zM243,201h1v1h-1zM243,220h1v1h-1zM243,239h1v1h-1zM243,259h1v1h-1zM243,278h1v1h-1zM243,297h1v1h-1zM243,316h1v1h-1zM243,335h1v1h-1zM243,354h1v1h-1zM243,373h1v1h-1zM243,392h1v1h-1zM243,412h1v1h-1zM243,431h1v1h-1zM243,450h1v1h-1zM243,469h1v1h-1zM243,488h1v1h-1zM243,507h1v1h-1zM243,526h1v1h-1zM243,545h1v1h-1zM243,565h1v1h-1zM243,584h1v1h-1zM243,603h1v1h-1zM243,622h1v1h-1zM243,641h1v1h-1zM243,660h1v1h-1zM243,679h1v1h-1zM243,699h1v1h-1zM243,718h1v1h-1zM243,737h1v1h-1zM262,125h1v1h-1zM262,144h1v1h-1zM262,163h1v1h-1zM262,182h1v1h-1zM262,201h1v1h-1zM262,220h1v1h-1zM262,239h1v1h-1zM262,259h1v1h-1zM262,278h1v1h-1zM262,297h1v1h-1zM262,316h1v1h-1zM262,335h1v1h-1zM262,354h1v1h-1zM262,373h1v1h-1zM262,392h1v1h-1zM262,412h1v1h-1zM262,431h1v1h-1zM262,450h1v1h-1zM262,469h1v1h-1zM262,488h1v1h-1zM262,507h1v1h-1zM262,526h1v1h-1zM262,545h1v1h-1zM262,565h1v1h-1zM262,584h1v1h-1zM262,603h1v1h-1zM262,622h1v1h-1zM262,641h1v1h-1zM262,660h1v1h-1zM262,679h1v1h-1zM262,699h1v1h-1zM262,718h1v1h-1zM262,737h1v1h-1zM281,125h1v1h-1zM281,144h1v1h-1zM281,163h1v1h-1zM281,182h1v1h-1zM281,201h1v1h-1zM281,220h1v1h-1zM281,239h1v1h-1zM281,259h1v1h-1zM281,278h1v1h-1zM281,297h1v1h-1zM281,316h1v1h-1zM281,335h1v1h-1zM281,354h1v1h-1zM281,373h1v1h-1zM281,392h1v1h-1zM281,412h1v1h-1zM281,431h1v1h-1zM281,450h1v1h-1zM281,469h1v1h-1zM281,488h1v1h-1zM281,507h1v1h-1zM281,526h1v1h-1zM281,545h1v1h-1zM281,565h1v1h-1zM281,584h1v1h-1zM281,603h1v1h-1zM281,622h1v1h-1zM281,641h1v1h-1zM281,660h1v1h-1zM281,679h1v1h-1zM281,699h1v1h-1zM281,718h1v1h-1zM281,737h1v1h-1zM300,125h1v1h-1zM300,144h1v1h-1zM300,163h1v1h-1zM300,182h1v1h-1zM300,201h1v1h-1zM300,220h1v1h-1zM300,239h1v1h-1zM300,259h1v1h-1zM300,278h1v1h-1zM300,297h1v1h-1zM300,316h1v1h-1zM300,335h1v1h-1zM300,354h1v1h-1zM300,373h1v1h-1zM300,392h1v1h-1zM300,412h1v1h-1zM300,431h1v1h-1zM300,450h1v1h-1zM300,469h1v1h-1zM300,488h1v1h-1zM300,507h1v1h-1zM300,526h1v1h-1zM300,545h1v1h-1zM300,565h1v1h-1zM300,584h1v1h-1zM300,603h1v1h-1zM300,622h1v1h-1zM300,641h1v1h-1zM300,660h1v1h-1zM300,679h1v1h-1zM300,699h1v1h-1zM300,718h1v1h-1zM300,737h1v1h-1zM320,125h1v1h-1zM320,144h1v1h-1zM320,163h1v1h-1zM320,182h1v1h-1zM320,201h1v1h-1zM320,220h1v1h-1zM320,239h1v1h-1zM320,259h1v1h-1zM320,278h1v1h-1zM320,297h1v1h-1zM320,316h1v1h-1zM320,335h1v1h-1zM320,354h1v1h-1zM320,373h1v1h-1zM320,392h1v1h-1zM320,412h1v1h-1zM320,431h1v1h-1zM320,450h1v1h-1zM320,469h1v1h-1zM320,488h1v1h-1zM320,507h1v1h-1zM320,526h1v1h-1zM320,545h1v1h-1zM320,565h1v1h-1zM320,584h1v1h-1zM320,603h1v1h-1zM320,622h1v1h-1zM320,641h1v1h-1zM320,660h1v1h-1zM320,679h1v1h-1zM320,699h1v1h-1zM320,718h1v1h-1zM320,737h1v1h-1zM339,125h1v1h-1zM339,144h1v1h-1zM339,163h1v1h-1zM339,182h1v1h-1zM339,201h1v1h-1zM339,220h1v1h-1zM339,239h1v1h-1zM339,259h1v1h-1zM339,278h1v1h-1zM339,297h1v1h-1zM339,316h1v1h-1zM339,335h1v1h-1zM339,354h1v1h-1zM339,373h1v1h-1zM339,392h1v1h-1zM339,412h1v1h-1zM339,431h1v1h-1zM339,450h1v1h-1zM339,469h1v1h-1zM339,488h1v1h-1zM339,507h1v1h-1zM339,526h1v1h-1zM339,545h1v1h-1zM339,565h1v1h-1zM339,584h1v1h-1zM339,603h1v1h-1zM339,622h1v1h-1zM339,641h1v1h-1zM339,660h1v1h-1zM339,679h1v1h-1zM339,699h1v1h-1zM339,718h1v1h-1zM339,737h1v1h-1zM358,125h1v1h-1zM358,144h1v1h-1zM358,163h1v1h-1zM358,201h1v1h-1zM358,220h1v1h-1zM358,239h1v1h-1zM358,259h1v1h-1zM358,278h1v1h-1zM358,297h1v1h-1zM358,316h1v1h-1zM358,354h1v1h-1zM358,373h1v1h-1zM358,392h1v1h-1zM358,412h1v1h-1zM358,431h1v1h-1zM358,450h1v1h-1zM358,469h1v1h-1zM358,507h1v1h-1zM358,526h1v1h-1zM358,545h1v1h-1zM358,565h1v1h-1zM358,584h1v1h-1zM358,603h1v1h-1zM358,622h1v1h-1zM358,660h1v1h-1zM358,679h1v1h-1zM358,699h1v1h-1zM358,718h1v1h-1zM358,737h1v1h-1zM377,125h1v1h-1zM377,144h1v1h-1zM377,163h1v1h-1zM377,182h1v1h-1zM377,201h1v1h-1zM377,220h1v1h-1zM377,239h1v1h-1zM377,259h1v1h-1zM377,278h1v1h-1zM377,297h1v1h-1zM377,316h1v1h-1zM377,335h1v1h-1zM377,354h1v1h-1zM377,373h1v1h-1zM377,392h1v1h-1zM377,412h1v1h-1zM377,431h1v1h-1zM377,450h1v1h-1zM377,469h1v1h-1zM377,488h1v1h-1zM377,507h1v1h-1zM377,526h1v1h-1zM377,545h1v1h-1zM377,565h1v1h-1zM377,584h1v1h-1zM377,603h1v1h-1zM377,622h1v1h-1zM377,641h1v1h-1zM377,660h1v1h-1zM377,679h1v1h-1zM377,699h1v1h-1zM377,718h1v1h-1zM377,737h1v1h-1zM396,125h1v1h-1zM396,144h1v1h-1zM396,163h1v1h-1zM396,182h1v1h-1zM396,201h1v1h-1zM396,220h1v1h-1zM396,239h1v1h-1zM396,259h1v1h-1zM396,278h1v1h-1zM396,297h1v1h-1zM396,316h1v1h-1zM396,335h1v1h-1zM396,354h1v1h-1zM396,373h1v1h-1zM396,392h1v1h-1zM396,412h1v1h-1zM396,431h1v1h-1zM396,450h1v1h-1zM396,469h1v1h-1zM396,488h1v1h-1zM396,507h1v1h-1zM396,526h1v1h-1zM396,545h1v1h-1zM396,565h1v1h-1zM396,584h1v1h-1zM396,603h1v1h-1zM396,622h1v1h-1zM396,641h1v1h-1zM396,660h1v1h-1zM396,679h1v1h-1zM396,699h1v1h-1zM396,718h1v1h-1zM396,737h1v1h-1zM415,125h1v1h-1zM415,144h1v1h-1zM415,163h1v1h-1zM415,182h1v1h-1zM415,201h1v1h-1zM415,220h1v1h-1zM415,239h1v1h-1zM415,259h1v1h-1zM415,278h1v1h-1zM415,297h1v1h-1zM415,316h1v1h-1zM415,335h1v1h-1zM415,354h1v1h-1zM415,373h1v1h-1zM415,392h1v1h-1zM415,412h1v1h-1zM415,431h1v1h-1zM415,450h1v1h-1zM415,469h1v1h-1zM415,488h1v1h-1zM415,507h1v1h-1zM415,526h1v1h-1zM415,545h1v1h-1zM415,565h1v1h-1zM415,584h1v1h-1zM415,603h1v1h-1zM415,622h1v1h-1zM415,641h1v1h-1zM415,660h1v1h-1zM415,679h1v1h-1zM415,699h1v1h-1zM415,718h1v1h-1zM415,737h1v1h-1zM434,125h1v1h-1zM434,144h1v1h-1zM434,163h1v1h-1zM434,182h1v1h-1zM434,201h1v1h-1zM434,220h1v1h-1zM434,239h1v1h-1zM434,259h1v1h-1zM434,278h1v1h-1zM434,297h1v1h-1zM434,316h1v1h-1zM434,335h1v1h-1zM434,354h1v1h-1zM434,373h1v1h-1zM434,392h1v1h-1zM434,412h1v1h-1zM434,431h1v1h-1zM434,450h1v1h-1zM434,469h1v1h-1zM434,488h1v1h-1zM434,507h1v1h-1zM434,526h1v1h-1zM434,545h1v1h-1zM434,565h1v1h-1zM434,584h1v1h-1zM434,603h1v1h-1zM434,622h1v1h-1zM434,641h1v1h-1zM434,660h1v1h-1zM434,679h1v1h-1zM434,699h1v1h-1zM434,718h1v1h-1zM434,737h1v1h-1zM453,125h1v1h-1zM453,144h1v1h-1zM453,163h1v1h-1zM453,182h1v1h-1zM453,201h1v1h-1zM453,220h1v1h-1zM453,239h1v1h-1zM453,259h1v1h-1zM453,278h1v1h-1zM453,297h1v1h-1zM453,316h1v1h-1zM453,335h1v1h-1zM453,354h1v1h-1zM453,373h1v1h-1zM453,392h1v1h-1zM453,412h1v1h-1zM453,431h1v1h-1zM453,450h1v1h-1zM453,469h1v1h-1zM453,488h1v1h-1zM453,507h1v1h-1zM453,526h1v1h-1zM453,545h1v1h-1zM453,565h1v1h-1zM453,584h1v1h-1zM453,603h1v1h-1zM453,622h1v1h-1zM453,641h1v1h-1zM453,660h1v1h-1zM453,679h1v1h-1zM453,699h1v1h-1zM453,718h1v1h-1zM453,737h1v1h-1zM473,125h1v1h-1zM473,144h1v1h-1zM473,163h1v1h-1zM473,182h1v1h-1zM473,201h1v1h-1zM473,220h1v1h-1zM473,239h1v1h-1zM473,259h1v1h-1zM473,278h1v1h-1zM473,297h1v1h-1zM473,316h1v1h-1zM473,335h1v1h-1zM473,354h1v1h-1zM473,373h1v1h-1zM473,392h1v1h-1zM473,412h1v1h-1zM473,431h1v1h-1zM473,450h1v1h-1zM473,469h1v1h-1zM473,488h1v1h-1zM473,507h1v1h-1zM473,526h1v1h-1zM473,545h1v1h-1zM473,565h1v1h-1zM473,584h1v1h-1zM473,603h1v1h-1zM473,622h1v1h-1zM473,641h1v1h-1zM473,660h1v1h-1zM473,679h1v1h-1zM473,699h1v1h-1zM473,718h1v1h-1zM473,737h1v1h-1zM492,125h1v1h-1zM492,144h1v1h-1zM492,163h1v1h-1zM492,182h1v1h-1zM492,201h1v1h-1zM492,220h1v1h-1zM492,239h1v1h-1zM492,259h1v1h-1zM492,278h1v1h-1zM492,297h1v1h-1zM492,316h1v1h-1zM492,335h1v1h-1zM492,354h1v1h-1zM492,373h1v1h-1zM492,392h1v1h-1zM492,412h1v1h-1zM492,431h1v1h-1zM492,450h1v1h-1zM492,469h1v1h-1zM492,488h1v1h-1zM492,507h1v1h-1zM492,526h1v1h-1zM492,545h1v1h-1zM492,565h1v1h-1zM492,584h1v1h-1zM492,603h1v1h-1zM492,622h1v1h-1zM492,641h1v1h-1zM492,660h1v1h-1zM492,679h1v1h-1zM492,699h1v1h-1zM492,718h1v1h-1zM492,737h1v1h-1zM511,125h1v1h-1zM511,144h1v1h-1zM511,163h1v1h-1zM511,201h1v1h-1zM511,220h1v1h-1zM511,239h1v1h-1zM511,259h1v1h-1zM511,278h1v1h-1zM511,297h1v1h-1zM511,316h1v1h-1zM511,354h1v1h-1zM511,373h1v1h-1zM511,392h1v1h-1zM511,412h1v1h-1zM511,431h1v1h-1zM511,450h1v1h-1zM511,469h1v1h-1zM511,507h1v1h-1zM511,526h1v1h-1zM511,545h1v1h-1zM511,565h1v1h-1zM511,584h1v1h-1zM511,603h1v1h-1zM511,622h1v1h-1zM511,660h1v1h-1zM511,679h1v1h-1zM511,699h1v1h-1zM511,718h1v1h-1zM511,737h1v1h-1zM530,125h1v1h-1zM530,144h1v1h-1zM530,163h1v1h-1zM530,182h1v1h-1zM530,201h1v1h-1zM530,220h1v1h-1zM530,239h1v1h-1zM530,259h1v1h-1zM530,278h1v1h-1zM530,297h1v1h-1zM530,316h1v1h-1zM530,335h1v1h-1zM530,354h1v1h-1zM530,373h1v1h-1zM530,392h1v1h-1zM530,412h1v1h-1zM530,431h1v1h-1zM530,450h1v1h-1zM530,469h1v1h-1zM530,488h1v1h-1zM530,507h1v1h-1zM530,526h1v1h-1zM530,545h1v1h-1zM530,565h1v1h-1zM530,584h1v1h-1zM530,603h1v1h-1zM530,622h1v1h-1zM530,641h1v1h-1zM530,660h1v1h-1zM530,679h1v1h-1zM530,699h1v1h-1zM530,718h1v1h-1zM530,737h1v1h-1zM549,125h1v1h-1zM549,144h1v1h-1zM549,163h1v1h-1zM549,182h1v1h-1zM549,201h1v1h-1zM549,220h1v1h-1zM549,239h1v1h-1zM549,259h1v1h-1zM549,278h1v1h-1zM549,297h1v1h-1zM549,316h1v1h-1zM549,335h1v1h-1zM549,354h1v1h-1zM549,373h1v1h-1zM549,392h1v1h-1zM549,412h1v1h-1zM549,431h1v1h-1zM549,450h1v1h-1zM549,469h1v1h-1zM549,488h1v1h-1zM549,507h1v1h-1zM549,526h1v1h-1zM549,545h1v1h-1zM549,565h1v1h-1zM549,584h1v1h-1zM549,603h1v1h-1zM549,622h1v1h-1zM549,641h1v1h-1zM549,660h1v1h-1zM549,679h1v1h-1zM549,699h1v1h-1zM549,718h1v1h-1zM549,737h1v1h-1zM568,125h1v1h-1zM568,144h1v1h-1zM568,163h1v1h-1zM568,182h1v1h-1zM568,201h1v1h-1zM568,220h1v1h-1zM568,239h1v1h-1zM568,259h1v1h-1zM568,278h1v1h-1zM568,297h1v1h-1zM568,316h1v1h-1zM568,335h1v1h-1zM568,354h1v1h-1zM568,373h1v1h-1zM568,392h1v1h-1zM568,412h1v1h-1zM568,431h1v1h-1zM568,450h1v1h-1zM568,469h1v1h-1zM568,488h1v1h-1zM568,507h1v1h-1zM568,526h1v1h-1zM568,545h1v1h-1zM568,565h1v1h-1zM568,584h1v1h-1zM568,603h1v1h-1zM568,622h1v1h-1zM568,641h1v1h-1zM568,660h1v1h-1zM568,679h1v1h-1zM568,699h1v1h-1zM568,718h1v1h-1zM568,737h1v1h-1zM587,125h1v1h-1zM587,144h1v1h-1zM587,163h1v1h-1zM587,182h1v1h-1zM587,201h1v1h-1zM587,220h1v1h-1zM587,239h1v1h-1zM587,259h1v1h-1zM587,278h1v1h-1zM587,297h1v1h-1zM587,316h1v1h-1zM587,335h1v1h-1zM587,354h1v1h-1zM587,373h1v1h-1zM587,392h1v1h-1zM587,412h1v1h-1zM587,431h1v1h-1zM587,450h1v1h-1zM587,469h1v1h-1zM587,488h1v1h-1zM587,507h1v1h-1zM587,526h1v1h-1zM587,545h1v1h-1zM587,565h1v1h-1zM587,584h1v1h-1zM587,603h1v1h-1zM587,622h1v1h-1zM587,641h1v1h-1zM587,660h1v1h-1zM587,679h1v1h-1zM587,699h1v1h-1zM587,718h1v1h-1zM587,737h1v1h-1zM607,125h1v1h-1zM607,144h1v1h-1zM607,163h1v1h-1zM607,182h1v1h-1zM607,201h1v1h-1zM607,220h1v1h-1zM607,239h1v1h-1zM607,259h1v1h-1zM607,278h1v1h-1zM607,297h1v1h-1zM607,316h1v1h-1zM607,335h1v1h-1zM607,354h1v1h-1zM607,373h1v1h-1zM607,392h1v1h-1zM607,412h1v1h-1zM607,431h1v1h-1zM607,450h1v1h-1zM607,469h1v1h-1zM607,488h1v1h-1zM607,507h1v1h-1zM607,526h1v1h-1zM607,545h1v1h-1zM607,565h1v1h-1zM607,584h1v1h-1zM607,603h1v1h-1zM607,622h1v1h-1zM607,641h1v1h-1zM607,660h1v1h-1zM607,679h1v1h-1zM607,699h1v1h-1zM607,718h1v1h-1zM607,737h1v1h-1zM626,125h1v1h-1zM626,144h1v1h-1zM626,163h1v1h-1zM626,182h1v1h-1zM626,201h1v1h-1zM626,220h1v1h-1zM626,239h1v1h-1zM626,259h1v1h-1zM626,278h1v1h-1zM626,297h1v1h-1zM626,316h1v1h-1zM626,335h1v1h-1zM626,354h1v1h-1zM626,373h1v1h-1zM626,392h1v1h-1zM626,412h1v1h-1zM626,431h1v1h-1zM626,450h1v1h-1zM626,469h1v1h-1zM626,488h1v1h-1zM626,507h1v1h-1zM626,526h1v1h-1zM626,545h1v1h-1zM626,565h1v1h-1zM626,584h1v1h-1zM626,603h1v1h-1zM626,622h1v1h-1zM626,641h1v1h-1zM626,660h1v1h-1zM626,679h1v1h-1zM626,699h1v1h-1zM626,718h1v1h-1zM626,737h1v1h-1zM645,125h1v1h-1zM645,144h1v1h-1zM645,163h1v1h-1zM645,182h1v1h-1zM645,201h1v1h-1zM645,220h1v1h-1zM645,239h1v1h-1zM645,259h1v1h-1zM645,278h1v1h-1zM645,297h1v1h-1zM645,316h1v1h-1zM645,335h1v1h-1zM645,354h1v1h-1zM645,373h1v1h-1zM645,392h1v1h-1zM645,412h1v1h-1zM645,431h1v1h-1zM645,450h1v1h-1zM645,469h1v1h-1zM645,488h1v1h-1zM645,507h1v1h-1zM645,526h1v1h-1zM645,545h1v1h-1zM645,565h1v1h-1zM645,584h1v1h-1zM645,603h1v1h-1zM645,622h1v1h-1zM645,641h1v1h-1zM645,660h1v1h-1zM645,679h1v1h-1zM645,699h1v1h-1zM645,718h1v1h-1zM645,737h1v1h-1zM664,125h1v1h-1zM664,144h1v1h-1zM664,163h1v1h-1zM664,201h1v1h-1zM664,220h1v1h-1zM664,239h1v1h-1zM664,259h1v1h-1zM664,278h1v1h-1zM664,297h1v1h-1zM664,316h1v1h-1zM664,354h1v1h-1zM664,373h1v1h-1zM664,392h1v1h-1zM664,412h1v1h-1zM664,431h1v1h-1zM664,450h1v1h-1zM664,469h1v1h-1zM664,507h1v1h-1zM664,526h1v1h-1zM664,545h1v1h-1zM664,565h1v1h-1zM664,584h1v1h-1zM664,603h1v1h-1zM664,622h1v1h-1zM664,660h1v1h-1zM664,679h1v1h-1zM664,699h1v1h-1zM664,718h1v1h-1zM664,737h1v1h-1zM683,125h1v1h-1zM683,144h1v1h-1zM683,163h1v1h-1zM683,182h1v1h-1zM683,201h1v1h-1zM683,220h1v1h-1zM683,239h1v1h-1zM683,259h1v1h-1zM683,278h1v1h-1zM683,297h1v1h-1zM683,316h1v1h-1zM683,335h1v1h-1zM683,354h1v1h-1zM683,373h1v1h-1zM683,392h1v1h-1zM683,412h1v1h-1zM683,431h1v1h-1zM683,450h1v1h-1zM683,469h1v1h-1zM683,488h1v1h-1zM683,507h1v1h-1zM683,526h1v1h-1zM683,545h1v1h-1zM683,565h1v1h-1zM683,584h1v1h-1zM683,603h1v1h-1zM683,622h1v1h-1zM683,641h1v1h-1zM683,660h1v1h-1zM683,679h1v1h-1zM683,699h1v1h-1zM683,718h1v1h-1zM683,737h1v1h-1zM702,125h1v1h-1zM702,144h1v1h-1zM702,163h1v1h-1zM702,182h1v1h-1zM702,201h1v1h-1zM702,220h1v1h-1zM702,239h1v1h-1zM702,259h1v1h-1zM702,278h1v1h-1zM702,297h1v1h-1zM702,316h1v1h-1zM702,335h1v1h-1zM702,354h1v1h-1zM702,373h1v1h-1zM702,392h1v1h-1zM702,412h1v1h-1zM702,431h1v1h-1zM702,450h1v1h-1zM702,469h1v1h-1zM702,488h1v1h-1zM702,507h1v1h-1zM702,526h1v1h-1zM702,545h1v1h-1zM702,565h1v1h-1zM702,584h1v1h-1zM702,603h1v1h-1zM702,622h1v1h-1zM702,641h1v1h-1zM702,660h1v1h-1zM702,679h1v1h-1zM702,699h1v1h-1zM702,718h1v1h-1zM702,737h1v1h-1zM721,125h1v1h-1zM721,144h1v1h-1zM721,163h1v1h-1zM721,182h1v1h-1zM721,201h1v1h-1zM721,220h1v1h-1zM721,239h1v1h-1zM721,259h1v1h-1zM721,278h1v1h-1zM721,297h1v1h-1zM721,316h1v1h-1zM721,335h1v1h-1zM721,354h1v1h-1zM721,373h1v1h-1zM721,392h1v1h-1zM721,412h1v1h-1zM721,431h1v1h-1zM721,450h1v1h-1zM721,469h1v1h-1zM721,488h1v1h-1zM721,507h1v1h-1zM721,526h1v1h-1zM721,545h1v1h-1zM721,565h1v1h-1zM721,584h1v1h-1zM721,603h1v1h-1zM721,622h1v1h-1zM721,641h1v1h-1zM721,660h1v1h-1zM721,679h1v1h-1zM721,699h1v1h-1zM721,718h1v1h-1zM721,737h1v1h-1zM740,125h1v1h-1zM740,144h1v1h-1zM740,163h1v1h-1zM740,182h1v1h-1zM740,201h1v1h-1zM740,220h1v1h-1zM740,239h1v1h-1zM740,259h1v1h-1zM740,278h1v1h-1zM740,297h1v1h-1zM740,316h1v1h-1zM740,335h1v1h-1zM740,354h1v1h-1zM740,373h1v1h-1zM740,392h1v1h-1zM740,412h1v1h-1zM740,431h1v1h-1zM740,450h1v1h-1zM740,469h1v1h-1zM740,488h1v1h-1zM740,507h1v1h-1zM740,526h1v1h-1zM740,545h1v1h-1zM740,565h1v1h-1zM740,584h1v1h-1zM740,603h1v1h-1zM740,622h1v1h-1zM740,641h1v1h-1zM740,660h1v1h-1zM740,679h1v1h-1zM740,699h1v1h-1zM740,718h1v1h-1zM740,737h1v1h-1zM760,125h1v1h-1zM760,144h1v1h-1zM760,163h1v1h-1zM760,182h1v1h-1zM760,201h1v1h-1zM760,220h1v1h-1zM760,239h1v1h-1zM760,259h1v1h-1zM760,278h1v1h-1zM760,297h1v1h-1zM760,316h1v1h-1zM760,335h1v1h-1zM760,354h1v1h-1zM760,373h1v1h-1zM760,392h1v1h-1zM760,412h1v1h-1zM760,431h1v1h-1zM760,450h1v1h-1zM760,469h1v1h-1zM760,488h1v1h-1zM760,507h1v1h-1zM760,526h1v1h-1zM760,545h1v1h-1zM760,565h1v1h-1zM760,584h1v1h-1zM760,603h1v1h-1zM760,622h1v1h-1zM760,641h1v1h-1zM760,660h1v1h-1zM760,679h1v1h-1zM760,699h1v1h-1zM760,718h1v1h-1zM760,737h1v1h-1zM779,125h1v1h-1zM779,144h1v1h-1zM779,163h1v1h-1zM779,182h1v1h-1zM779,201h1v1h-1zM779,220h1v1h-1zM779,239h1v1h-1zM779,259h1v1h-1zM779,278h1v1h-1zM779,297h1v1h-1zM779,316h1v1h-1zM779,335h1v1h-1zM779,354h1v1h-1zM779,373h1v1h-1zM779,392h1v1h-1zM779,412h1v1h-1zM779,431h1v1h-1zM779,450h1v1h-1zM779,469h1v1h-1zM779,488h1v1h-1zM779,507h1v1h-1zM779,526h1v1h-1zM779,545h1v1h-1zM779,565h1v1h-1zM779,584h1v1h-1zM779,603h1v1h-1zM779,622h1v1h-1zM779,641h1v1h-1zM779,660h1v1h-1zM779,679h1v1h-1zM779,699h1v1h-1zM779,718h1v1h-1zM779,737h1v1h-1zM798,125h1v1h-1zM798,144h1v1h-1zM798,163h1v1h-1zM798,182h1v1h-1zM798,201h1v1h-1zM798,220h1v1h-1zM798,239h1v1h-1zM798,259h1v1h-1zM798,278h1v1h-1zM798,297h1v1h-1zM798,316h1v1h-1zM798,335h1v1h-1zM798,354h1v1h-1zM798,373h1v1h-1zM798,392h1v1h-1zM798,412h1v1h-1zM798,431h1v1h-1zM798,450h1v1h-1zM798,469h1v1h-1zM798,488h1v1h-1zM798,507h1v1h-1zM798,526h1v1h-1zM798,545h1v1h-1zM798,565h1v1h-1zM798,584h1v1h-1zM798,603h1v1h-1zM798,622h1v1h-1zM798,641h1v1h-1zM798,660h1v1h-1zM798,679h1v1h-1zM798,699h1v1h-1zM798,718h1v1h-1zM798,737h1v1h-1zM817,125h1v1h-1zM817,144h1v1h-1zM817,163h1v1h-1zM817,201h1v1h-1zM817,220h1v1h-1zM817,239h1v1h-1zM817,259h1v1h-1zM817,278h1v1h-1zM817,297h1v1h-1zM817,316h1v1h-1zM817,354h1v1h-1zM817,373h1v1h-1zM817,392h1v1h-1zM817,412h1v1h-1zM817,431h1v1h-1zM817,450h1v1h-1zM817,469h1v1h-1zM817,507h1v1h-1zM817,526h1v1h-1zM817,545h1v1h-1zM817,565h1v1h-1zM817,584h1v1h-1zM817,603h1v1h-1zM817,622h1v1h-1zM817,660h1v1h-1zM817,679h1v1h-1zM817,699h1v1h-1zM817,718h1v1h-1zM817,737h1v1h-1zM836,125h1v1h-1zM836,144h1v1h-1zM836,163h1v1h-1zM836,182h1v1h-1zM836,201h1v1h-1zM836,220h1v1h-1zM836,239h1v1h-1zM836,259h1v1h-1zM836,278h1v1h-1zM836,297h1v1h-1zM836,316h1v1h-1zM836,335h1v1h-1zM836,354h1v1h-1zM836,373h1v1h-1zM836,392h1v1h-1zM836,412h1v1h-1zM836,431h1v1h-1zM836,450h1v1h-1zM836,469h1v1h-1zM836,488h1v1h-1zM836,507h1v1h-1zM836,526h1v1h-1zM836,545h1v1h-1zM836,565h1v1h-1zM836,584h1v1h-1zM836,603h1v1h-1zM836,622h1v1h-1zM836,641h1v1h-1zM836,660h1v1h-1zM836,679h1v1h-1zM836,699h1v1h-1zM836,718h1v1h-1zM836,737h1v1h-1zM855,125h1v1h-1zM855,144h1v1h-1zM855,163h1v1h-1zM855,182h1v1h-1zM855,201h1v1h-1zM855,220h1v1h-1zM855,239h1v1h-1zM855,259h1v1h-1zM855,278h1v1h-1zM855,297h1v1h-1zM855,316h1v1h-1zM855,335h1v1h-1zM855,354h1v1h-1zM855,373h1v1h-1zM855,392h1v1h-1zM855,412h1v1h-1zM855,431h1v1h-1zM855,450h1v1h-1zM855,469h1v1h-1zM855,488h1v1h-1zM855,507h1v1h-1zM855,526h1v1h-1zM855,545h1v1h-1zM855,565h1v1h-1zM855,584h1v1h-1zM855,603h1v1h-1zM855,622h1v1h-1zM855,641h1v1h-1zM855,660h1v1h-1zM855,679h1v1h-1zM855,699h1v1h-1zM855,718h1v1h-1zM855,737h1v1h-1zM874,125h1v1h-1zM874,144h1v1h-1zM874,163h1v1h-1zM874,182h1v1h-1zM874,201h1v1h-1zM874,220h1v1h-1zM874,239h1v1h-1zM874,259h1v1h-1zM874,278h1v1h-1zM874,297h1v1h-1zM874,316h1v1h-1zM874,335h1v1h-1zM874,354h1v1h-1zM874,373h1v1h-1zM874,392h1v1h-1zM874,412h1v1h-1zM874,431h1v1h-1zM874,450h1v1h-1zM874,469h1v1h-1zM874,488h1v1h-1zM874,507h1v1h-1zM874,526h1v1h-1zM874,545h1v1h-1zM874,565h1v1h-1zM874,584h1v1h-1zM874,603h1v1h-1zM874,622h1v1h-1zM874,641h1v1h-1zM874,660h1v1h-1zM874,679h1v1h-1zM874,699h1v1h-1zM874,718h1v1h-1zM874,737h1v1h-1zM893,125h1v1h-1zM893,144h1v1h-1zM893,163h1v1h-1zM893,182h1v1h-1zM893,201h1v1h-1zM893,220h1v1h-1zM893,239h1v1h-1zM893,259h1v1h-1zM893,278h1v1h-1zM893,297h1v1h-1zM893,316h1v1h-1zM893,335h1v1h-1zM893,354h1v1h-1zM893,373h1v1h-1zM893,392h1v1h-1zM893,412h1v1h-1zM893,431h1v1h-1zM893,450h1v1h-1zM893,469h1v1h-1zM893,488h1v1h-1zM893,507h1v1h-1zM893,526h1v1h-1zM893,545h1v1h-1zM893,565h1v1h-1zM893,584h1v1h-1zM893,603h1v1h-1zM893,622h1v1h-1zM893,641h1v1h-1zM893,660h1v1h-1zM893,679h1v1h-1zM893,699h1v1h-1zM893,718h1v1h-1zM893,737h1v1h-1zM913,125h1v1h-1zM913,144h1v1h-1zM913,163h1v1h-1zM913,182h1v1h-1zM913,201h1v1h-1zM913,220h1v1h-1zM913,239h1v1h-1zM913,259h1v1h-1zM913,278h1v1h-1zM913,297h1v1h-1zM913,316h1v1h-1zM913,335h1v1h-1zM913,354h1v1h-1zM913,373h1v1h-1zM913,392h1v1h-1zM913,412h1v1h-1zM913,431h1v1h-1zM913,450h1v1h-1zM913,469h1v1h-1zM913,488h1v1h-1zM913,507h1v1h-1zM913,526h1v1h-1zM913,545h1v1h-1zM913,565h1v1h-1zM913,584h1v1h-1zM913,603h1v1h-1zM913,622h1v1h-1zM913,641h1v1h-1zM913,660h1v1h-1zM913,679h1v1h-1zM913,699h1v1h-1zM913,718h1v1h-1zM913,737h1v1h-1zM932,125h1v1h-1zM932,144h1v1h-1zM932,163h1v1h-1zM932,182h1v1h-1zM932,201h1v1h-1zM932,220h1v1h-1zM932,239h1v1h-1zM932,259h1v1h-1zM932,278h1v1h-1zM932,297h1v1h-1zM932,316h1v1h-1zM932,335h1v1h-1zM932,354h1v1h-1zM932,373h1v1h-1zM932,392h1v1h-1zM932,412h1v1h-1zM932,431h1v1h-1zM932,450h1v1h-1zM932,469h1v1h-1zM932,488h1v1h-1zM932,507h1v1h-1zM932,526h1v1h-1zM932,545h1v1h-1zM932,565h1v1h-1zM932,584h1v1h-1zM932,603h1v1h-1zM932,622h1v1h-1zM932,641h1v1h-1zM932,660h1v1h-1zM932,679h1v1h-1zM932,699h1v1h-1zM932,718h1v1h-1zM932,737h1v1h-1zM951,125h1v1h-1zM951,144h1v1h-1zM951,163h1v1h-1zM951,182h1v1h-1zM951,201h1v1h-1zM951,220h1v1h-1zM951,239h1v1h-1zM951,259h1v1h-1zM951,278h1v1h-1zM951,297h1v1h-1zM951,316h1v1h-1zM951,335h1v1h-1zM951,354h1v1h-1zM951,373h1v1h-1zM951,392h1v1h-1zM951,412h1v1h-1zM951,431h1v1h-1zM951,450h1v1h-1zM951,469h1v1h-1zM951,488h1v1h-1zM951,507h1v1h-1zM951,526h1v1h-1zM951,545h1v1h-1zM951,565h1v1h-1zM951,584h1v1h-1zM951,603h1v1h-1zM951,622h1v1h-1zM951,641h1v1h-1zM951,660h1v1h-1zM951,679h1v1h-1zM951,699h1v1h-1zM951,718h1v1h-1zM951,737h1v1h-1zM970,125h1v1h-1zM970,144h1v1h-1zM970,163h1v1h-1zM970,201h1v1h-1zM970,220h1v1h-1zM970,239h1v1h-1zM970,259h1v1h-1zM970,278h1v1h-1zM970,297h1v1h-1zM970,316h1v1h-1zM970,354h1v1h-1zM970,373h1v1h-1zM970,392h1v1h-1zM970,412h1v1h-1zM970,431h1v1h-1zM970,450h1v1h-1zM970,469h1v1h-1zM970,507h1v1h-1zM970,526h1v1h-1zM970,545h1v1h-1zM970,565h1v1h-1zM970,584h1v1h-1zM970,603h1v1h-1zM970,622h1v1h-1zM970,660h1v1h-1zM970,679h1v1h-1zM970,699h1v1h-1zM970,718h1v1h-1zM970,737h1v1h-1zM989,125h1v1h-1zM989,144h1v1h-1zM989,163h1v1h-1zM989,182h1v1h-1zM989,201h1v1h-1zM989,220h1v1h-1zM989,239h1v1h-1zM989,259h1v1h-1zM989,278h1v1h-1zM989,297h1v1h-1zM989,316h1v1h-1zM989,335h1v1h-1zM989,354h1v1h-1zM989,373h1v1h-1zM989,392h1v1h-1zM989,412h1v1h-1zM989,431h1v1h-1zM989,450h1v1h-1zM989,469h1v1h-1zM989,488h1v1h-1zM989,507h1v1h-1zM989,526h1v1h-1zM989,545h1v1h-1zM989,565h1v1h-1zM989,584h1v1h-1zM989,603h1v1h-1zM989,622h1v1h-1zM989,641h1v1h-1zM989,660h1v1h-1zM989,679h1v1h-1zM989,699h1v1h-1zM989,718h1v1h-1zM989,737h1v1h-1zM1008,125h1v1h-1zM1008,144h1v1h-1zM1008,163h1v1h-1zM1008,182h1v1h-1zM1008,201h1v1h-1zM1008,220h1v1h-1zM1008,239h1v1h-1zM1008,259h1v1h-1zM1008,278h1v1h-1zM1008,297h1v1h-1zM1008,316h1v1h-1zM1008,335h1v1h-1zM1008,354h1v1h-1zM1008,373h1v1h-1zM1008,392h1v1h-1zM1008,412h1v1h-1zM1008,431h1v1h-1zM1008,450h1v1h-1zM1008,469h1v1h-1zM1008,488h1v1h-1zM1008,507h1v1h-1zM1008,526h1v1h-1zM1008,545h1v1h-1zM1008,565h1v1h-1zM1008,584h1v1h-1zM1008,603h1v1h-1zM1008,622h1v1h-1zM1008,641h1v1h-1zM1008,660h1v1h-1zM1008,679h1v1h-1zM1008,699h1v1h-1zM1008,718h1v1h-1zM1008,737h1v1h-1zM1027,125h1v1h-1zM1027,144h1v1h-1zM1027,163h1v1h-1zM1027,182h1v1h-1zM1027,201h1v1h-1zM1027,220h1v1h-1zM1027,239h1v1h-1zM1027,259h1v1h-1zM1027,278h1v1h-1zM1027,297h1v1h-1zM1027,316h1v1h-1zM1027,335h1v1h-1zM1027,354h1v1h-1zM1027,373h1v1h-1zM1027,392h1v1h-1zM1027,412h1v1h-1zM1027,431h1v1h-1zM1027,450h1v1h-1zM1027,469h1v1h-1zM1027,488h1v1h-1zM1027,507h1v1h-1zM1027,526h1v1h-1zM1027,545h1v1h-1zM1027,565h1v1h-1zM1027,584h1v1h-1zM1027,603h1v1h-1zM1027,622h1v1h-1zM1027,641h1v1h-1zM1027,660h1v1h-1zM1027,679h1v1h-1zM1027,699h1v1h-1zM1027,718h1v1h-1zM1027,737h1v1h-1zM1047,125h1v1h-1zM1047,144h1v1h-1zM1047,163h1v1h-1zM1047,182h1v1h-1zM1047,201h1v1h-1zM1047,220h1v1h-1zM1047,239h1v1h-1zM1047,259h1v1h-1zM1047,278h1v1h-1zM1047,297h1v1h-1zM1047,316h1v1h-1zM1047,335h1v1h-1zM1047,354h1v1h-1zM1047,373h1v1h-1zM1047,392h1v1h-1zM1047,412h1v1h-1zM1047,431h1v1h-1zM1047,450h1v1h-1zM1047,469h1v1h-1zM1047,488h1v1h-1zM1047,507h1v1h-1zM1047,526h1v1h-1zM1047,545h1v1h-1zM1047,565h1v1h-1zM1047,584h1v1h-1zM1047,603h1v1h-1zM1047,622h1v1h-1zM1047,641h1v1h-1zM1047,660h1v1h-1zM1047,679h1v1h-1zM1047,699h1v1h-1zM1047,718h1v1h-1zM1047,737h1v1h-1zM1066,125h1v1h-1zM1066,144h1v1h-1zM1066,163h1v1h-1zM1066,182h1v1h-1zM1066,201h1v1h-1zM1066,220h1v1h-1zM1066,239h1v1h-1zM1066,259h1v1h-1zM1066,278h1v1h-1zM1066,297h1v1h-1zM1066,316h1v1h-1zM1066,335h1v1h-1zM1066,354h1v1h-1zM1066,373h1v1h-1zM1066,392h1v1h-1zM1066,412h1v1h-1zM1066,431h1v1h-1zM1066,450h1v1h-1zM1066,469h1v1h-1zM1066,488h1v1h-1zM1066,507h1v1h-1zM1066,526h1v1h-1zM1066,545h1v1h-1zM1066,565h1v1h-1zM1066,584h1v1h-1zM1066,603h1v1h-1zM1066,622h1v1h-1zM1066,641h1v1h-1zM1066,660h1v1h-1zM1066,679h1v1h-1zM1066,699h1v1h-1zM1066,718h1v1h-1zM1066,737h1v1h-1zM1085,125h1v1h-1zM1085,144h1v1h-1zM1085,163h1v1h-1zM1085,182h1v1h-1zM1085,201h1v1h-1zM1085,220h1v1h-1zM1085,239h1v1h-1zM1085,259h1v1h-1zM1085,278h1v1h-1zM1085,297h1v1h-1zM1085,316h1v1h-1zM1085,335h1v1h-1zM1085,354h1v1h-1zM1085,373h1v1h-1zM1085,392h1v1h-1zM1085,412h1v1h-1zM1085,431h1v1h-1zM1085,450h1v1h-1zM1085,469h1v1h-1zM1085,488h1v1h-1zM1085,507h1v1h-1zM1085,526h1v1h-1zM1085,545h1v1h-1zM1085,565h1v1h-1zM1085,584h1v1h-1zM1085,603h1v1h-1zM1085,622h1v1h-1zM1085,641h1v1h-1zM1085,660h1v1h-1zM1085,679h1v1h-1zM1085,699h1v1h-1zM1085,718h1v1h-1zM1085,737h1v1h-1zM1104,125h1v1h-1zM1104,144h1v1h-1zM1104,163h1v1h-1zM1104,182h1v1h-1zM1104,201h1v1h-1zM1104,220h1v1h-1zM1104,239h1v1h-1zM1104,259h1v1h-1zM1104,278h1v1h-1zM1104,297h1v1h-1zM1104,316h1v1h-1zM1104,335h1v1h-1zM1104,354h1v1h-1zM1104,373h1v1h-1zM1104,392h1v1h-1zM1104,412h1v1h-1zM1104,431h1v1h-1zM1104,450h1v1h-1zM1104,469h1v1h-1zM1104,488h1v1h-1zM1104,507h1v1h-1zM1104,526h1v1h-1zM1104,545h1v1h-1zM1104,565h1v1h-1zM1104,584h1v1h-1zM1104,603h1v1h-1zM1104,622h1v1h-1zM1104,641h1v1h-1zM1104,660h1v1h-1zM1104,679h1v1h-1zM1104,699h1v1h-1zM1104,718h1v1h-1zM1104,737h1v1h-1zM1123,125h1v1h-1zM1123,144h1v1h-1zM1123,163h1v1h-1zM1123,201h1v1h-1zM1123,220h1v1h-1zM1123,239h1v1h-1zM1123,259h1v1h-1zM1123,278h1v1h-1zM1123,297h1v1h-1zM1123,316h1v1h-1zM1123,354h1v1h-1zM1123,373h1v1h-1zM1123,392h1v1h-1zM1123,412h1v1h-1zM1123,431h1v1h-1zM1123,450h1v1h-1zM1123,469h1v1h-1zM1123,507h1v1h-1zM1123,526h1v1h-1zM1123,545h1v1h-1zM1123,565h1v1h-1zM1123,584h1v1h-1zM1123,603h1v1h-1zM1123,622h1v1h-1zM1123,660h1v1h-1zM1123,679h1v1h-1zM1123,699h1v1h-1zM1123,718h1v1h-1zM1123,737h1v1h-1zM1142,125h1v1h-1zM1142,144h1v1h-1zM1142,163h1v1h-1zM1142,182h1v1h-1zM1142,201h1v1h-1zM1142,220h1v1h-1zM1142,239h1v1h-1zM1142,259h1v1h-1zM1142,278h1v1h-1zM1142,297h1v1h-1zM1142,316h1v1h-1zM1142,335h1v1h-1zM1142,354h1v1h-1zM1142,373h1v1h-1zM1142,392h1v1h-1zM1142,412h1v1h-1zM1142,431h1v1h-1zM1142,450h1v1h-1zM1142,469h1v1h-1zM1142,488h1v1h-1zM1142,507h1v1h-1zM1142,526h1v1h-1zM1142,545h1v1h-1zM1142,565h1v1h-1zM1142,584h1v1h-1zM1142,603h1v1h-1zM1142,622h1v1h-1zM1142,641h1v1h-1zM1142,660h1v1h-1zM1142,679h1v1h-1zM1142,699h1v1h-1zM1142,718h1v1h-1zM1142,737h1v1h-1zM1161,125h1v1h-1zM1161,144h1v1h-1zM1161,163h1v1h-1zM1161,182h1v1h-1zM1161,201h1v1h-1zM1161,220h1v1h-1zM1161,239h1v1h-1zM1161,259h1v1h-1zM1161,278h1v1h-1zM1161,297h1v1h-1zM1161,316h1v1h-1zM1161,335h1v1h-1zM1161,354h1v1h-1zM1161,373h1v1h-1zM1161,392h1v1h-1zM1161,412h1v1h-1zM1161,431h1v1h-1zM1161,450h1v1h-1zM1161,469h1v1h-1zM1161,488h1v1h-1zM1161,507h1v1h-1zM1161,526h1v1h-1zM1161,545h1v1h-1zM1161,565h1v1h-1zM1161,584h1v1h-1zM1161,603h1v1h-1zM1161,622h1v1h-1zM1161,641h1v1h-1zM1161,660h1v1h-1zM1161,679h1v1h-1zM1161,699h1v1h-1zM1161,718h1v1h-1zM1161,737h1v1h-1zM1180,125h1v1h-1zM1180,144h1v1h-1zM1180,163h1v1h-1zM1180,182h1v1h-1zM1180,201h1v1h-1zM1180,220h1v1h-1zM1180,239h1v1h-1zM1180,259h1v1h-1zM1180,278h1v1h-1zM1180,297h1v1h-1zM1180,316h1v1h-1zM1180,335h1v1h-1zM1180,354h1v1h-1zM1180,373h1v1h-1zM1180,392h1v1h-1zM1180,412h1v1h-1zM1180,431h1v1h-1zM1180,450h1v1h-1zM1180,469h1v1h-1zM1180,488h1v1h-1zM1180,507h1v1h-1zM1180,526h1v1h-1zM1180,545h1v1h-1zM1180,565h1v1h-1zM1180,584h1v1h-1zM1180,603h1v1h-1zM1180,622h1v1h-1zM1180,641h1v1h-1zM1180,660h1v1h-1zM1180,679h1v1h-1zM1180,699h1v1h-1zM1180,718h1v1h-1zM1180,737h1v1h-1zM1200,125h1v1h-1zM1200,144h1v1h-1zM1200,163h1v1h-1zM1200,182h1v1h-1zM1200,201h1v1h-1zM1200,220h1v1h-1zM1200,239h1v1h-1zM1200,259h1v1h-1zM1200,278h1v1h-1zM1200,297h1v1h-1zM1200,316h1v1h-1zM1200,335h1v1h-1zM1200,354h1v1h-1zM1200,373h1v1h-1zM1200,392h1v1h-1zM1200,412h1v1h-1zM1200,431h1v1h-1zM1200,450h1v1h-1zM1200,469h1v1h-1zM1200,488h1v1h-1zM1200,507h1v1h-1zM1200,526h1v1h-1zM1200,545h1v1h-1zM1200,565h1v1h-1zM1200,584h1v1h-1zM1200,603h1v1h-1zM1200,622h1v1h-1zM1200,641h1v1h-1zM1200,660h1v1h-1zM1200,679h1v1h-1zM1200,699h1v1h-1zM1200,718h1v1h-1zM1200,737h1v1h-1zM1219,125h1v1h-1zM1219,144h1v1h-1zM1219,163h1v1h-1zM1219,182h1v1h-1zM1219,201h1v1h-1zM1219,220h1v1h-1zM1219,239h1v1h-1zM1219,259h1v1h-1zM1219,278h1v1h-1zM1219,297h1v1h-1zM1219,316h1v1h-1zM1219,335h1v1h-1zM1219,354h1v1h-1zM1219,373h1v1h-1zM1219,392h1v1h-1zM1219,412h1v1h-1zM1219,431h1v1h-1zM1219,450h1v1h-1zM1219,469h1v1h-1zM1219,488h1v1h-1zM1219,507h1v1h-1zM1219,526h1v1h-1zM1219,545h1v1h-1zM1219,565h1v1h-1zM1219,584h1v1h-1zM1219,603h1v1h-1zM1219,622h1v1h-1zM1219,641h1v1h-1zM1219,660h1v1h-1zM1219,679h1v1h-1zM1219,699h1v1h-1zM1219,718h1v1h-1zM1219,737h1v1h-1zM1238,125h1v1h-1zM1238,144h1v1h-1zM1238,163h1v1h-1zM1238,182h1v1h-1zM1238,201h1v1h-1zM1238,220h1v1h-1zM1238,239h1v1h-1zM1238,259h1v1h-1zM1238,278h1v1h-1zM1238,297h1v1h-1zM1238,316h1v1h-1zM1238,335h1v1h-1zM1238,354h1v1h-1zM1238,373h1v1h-1zM1238,392h1v1h-1zM1238,412h1v1h-1zM1238,431h1v1h-1zM1238,450h1v1h-1zM1238,469h1v1h-1zM1238,488h1v1h-1zM1238,507h1v1h-1zM1238,526h1v1h-1zM1238,545h1v1h-1zM1238,565h1v1h-1zM1238,584h1v1h-1zM1238,603h1v1h-1zM1238,622h1v1h-1zM1238,641h1v1h-1zM1238,660h1v1h-1zM1238,679h1v1h-1zM1238,699h1v1h-1zM1238,718h1v1h-1zM1238,737h1v1h-1zM1257,125h1v1h-1zM1257,144h1v1h-1zM1257,163h1v1h-1zM1257,182h1v1h-1zM1257,201h1v1h-1zM1257,220h1v1h-1zM1257,239h1v1h-1zM1257,259h1v1h-1zM1257,278h1v1h-1zM1257,297h1v1h-1zM1257,316h1v1h-1zM1257,335h1v1h-1zM1257,354h1v1h-1zM1257,373h1v1h-1zM1257,392h1v1h-1zM1257,412h1v1h-1zM1257,431h1v1h-1zM1257,450h1v1h-1zM1257,469h1v1h-1zM1257,488h1v1h-1zM1257,507h1v1h-1zM1257,526h1v1h-1zM1257,545h1v1h-1zM1257,565h1v1h-1zM1257,584h1v1h-1zM1257,603h1v1h-1zM1257,622h1v1h-1zM1257,641h1v1h-1zM1257,660h1v1h-1zM1257,679h1v1h-1zM1257,699h1v1h-1zM1257,718h1v1h-1zM1257,737h1v1h-1z" fill="#317E66" shape-rendering="crispEdges"/>
<path d="M204,182h3v1h-3zM205,181h1v3h-1zM204,335h3v1h-3zM205,334h1v3h-1zM204,488h3v1h-3zM205,487h1v3h-1zM204,641h3v1h-3zM205,640h1v3h-1zM357,182h3v1h-3zM358,181h1v3h-1zM357,335h3v1h-3zM358,334h1v3h-1zM357,488h3v1h-3zM358,487h1v3h-1zM357,641h3v1h-3zM358,640h1v3h-1zM510,182h3v1h-3zM511,181h1v3h-1zM510,335h3v1h-3zM511,334h1v3h-1zM510,488h3v1h-3zM511,487h1v3h-1zM510,641h3v1h-3zM511,640h1v3h-1zM663,182h3v1h-3zM664,181h1v3h-1zM663,335h3v1h-3zM664,334h1v3h-1zM663,488h3v1h-3zM664,487h1v3h-1zM663,641h3v1h-3zM664,640h1v3h-1zM816,182h3v1h-3zM817,181h1v3h-1zM816,335h3v1h-3zM817,334h1v3h-1zM816,488h3v1h-3zM817,487h1v3h-1zM816,641h3v1h-3zM817,640h1v3h-1zM969,182h3v1h-3zM970,181h1v3h-1zM969,335h3v1h-3zM970,334h1v3h-1zM969,488h3v1h-3zM970,487h1v3h-1zM969,641h3v1h-3zM970,640h1v3h-1zM1122,182h3v1h-3zM1123,181h1v3h-1zM1122,335h3v1h-3zM1123,334h1v3h-1zM1122,488h3v1h-3zM1123,487h1v3h-1zM1122,641h3v1h-3zM1123,640h1v3h-1z" fill="#FFFFFF" shape-rendering="crispEdges"/>
<path d="M578.34,268.58 L578.34,172.94 L836.59,172.94 L836.59,211.19" stroke="#3C98D4" stroke-width="1.5" fill="none"/>
<path d="M549.64,287.71 L444.43,287.71 L444.43,622.49 L559.20,622.49" stroke="#3C98D4" stroke-width="1.5" fill="none"/>
<path d="M425.10,450.00 L444.43,450.32" stroke="#3C98D4" stroke-width="1.5" fill="none"/>
<path d="M578.34,287.71 L607.03,287.71" stroke="#3C98D4" stroke-width="1.5" fill="none"/>
<path d="M578.34,306.85 L578.34,325.98" stroke="#3C98D4" stroke-width="1.5" fill="none"/>
<path d="M530.51,345.11 L530.51,325.98 L635.72,325.98 L635.72,345.11" stroke="#3C98D4" stroke-width="1.5" fill="none"/>
<path d="M530.51,364.24 L635.72,364.24" stroke="#3C98D4" stroke-width="1.5" fill="none"/>
<path d="M453.99,364.24 L501.81,364.24" stroke="#3C98D4" stroke-width="1.5" fill="none"/>
<path d="M530.51,383.37 L530.51,536.40" stroke="#3C98D4" stroke-width="1.5" fill="none"/>
<path d="M664.42,364.24 L702.68,364.24 L702.68,555.53 L664.42,555.53" stroke="#3C98D4" stroke-width="1.5" fill="none"/>
<path d="M635.72,383.37 L635.72,402.50" stroke="#3C98D4" stroke-width="1.5" fill="none"/>
<path d="M635.72,421.62 L683.55,421.62" stroke="#3C98D4" stroke-width="1.5" fill="none"/>
<path d="M607.03,421.62 L549.64,421.62" stroke="#3C98D4" stroke-width="1.5" fill="none"/>
<path d="M635.72,440.75 L635.72,469.45" stroke="#3C98D4" stroke-width="1.5" fill="none"/>
<path d="M635.72,450.32 L712.25,450.32" stroke="#3C98D4" stroke-width="1.5" fill="none"/>
<path d="M530.51,459.88 L635.72,459.88" stroke="#3C98D4" stroke-width="1.5" fill="none"/>
<path d="M607.03,488.58 L549.64,488.58" stroke="#3C98D4" stroke-width="1.5" fill="none"/>
<path d="M635.72,488.58 L673.99,488.58" stroke="#3C98D4" stroke-width="1.5" fill="none"/>
<path d="M635.72,507.71 L635.72,536.40" stroke="#3C98D4" stroke-width="1.5" fill="none"/>
<path d="M530.51,555.53 L635.72,555.53" stroke="#3C98D4" stroke-width="1.5" fill="none"/>
<path d="M453.99,555.53 L501.81,555.53" stroke="#3C98D4" stroke-width="1.5" fill="none"/>
<path d="M530.51,574.66 L530.51,593.79 L635.72,593.79 L635.72,574.66" stroke="#3C98D4" stroke-width="1.5" fill="none"/>
<path d="M587.90,593.79 L587.90,603.36" stroke="#3C98D4" stroke-width="1.5" fill="none"/>
<path d="M587.90,622.49 L635.72,622.49" stroke="#3C98D4" stroke-width="1.5" fill="none"/>
<path d="M587.90,641.62 L587.90,699.01 L836.59,699.01 L836.59,641.62" stroke="#3C98D4" stroke-width="1.5" fill="none"/>
<path d="M865.29,230.32 L922.67,230.32" stroke="#3C98D4" stroke-width="1.5" fill="none"/>
<path d="M836.59,230.32 L779.20,230.32" stroke="#3C98D4" stroke-width="1.5" fill="none"/>
<path d="M836.59,249.45 L836.59,268.58" stroke="#3C98D4" stroke-width="1.5" fill="none"/>
<path d="M865.29,287.71 L980.07,287.71 L980.07,622.49 L865.29,622.49" stroke="#3C98D4" stroke-width="1.5" fill="none"/>
<path d="M980.07,450.32 L999.50,449.80" stroke="#3C98D4" stroke-width="1.5" fill="none"/>
<path d="M836.59,287.71 L779.20,287.71" stroke="#3C98D4" stroke-width="1.5" fill="none"/>
<path d="M836.59,306.85 L836.59,345.11" stroke="#3C98D4" stroke-width="1.5" fill="none"/>
<path d="M788.76,345.11 L893.98,345.11" stroke="#3C98D4" stroke-width="1.5" fill="none"/>
<path d="M788.76,364.24 L893.98,364.24" stroke="#3C98D4" stroke-width="1.5" fill="none"/>
<path d="M760.07,364.24 L712.25,364.24 L712.25,555.53 L760.07,555.53" stroke="#3C98D4" stroke-width="1.5" fill="none"/>
<path d="M922.67,364.24 L951.37,364.24" stroke="#3C98D4" stroke-width="1.5" fill="none"/>
<path d="M788.76,383.37 L788.76,402.50" stroke="#3C98D4" stroke-width="1.5" fill="none"/>
<path d="M817.46,421.62 L874.85,421.62" stroke="#3C98D4" stroke-width="1.5" fill="none"/>
<path d="M788.76,421.62 L740.94,421.62" stroke="#3C98D4" stroke-width="1.5" fill="none"/>
<path d="M788.76,440.75 L788.76,469.45" stroke="#3C98D4" stroke-width="1.5" fill="none"/>
<path d="M702.68,459.88 L788.76,459.88" stroke="#3C98D4" stroke-width="1.5" fill="none"/>
<path d="M788.76,450.32 L893.98,450.32" stroke="#3C98D4" stroke-width="1.5" fill="none"/>
<path d="M893.98,383.37 L893.98,536.40" stroke="#3C98D4" stroke-width="1.5" fill="none"/>
<path d="M817.46,488.58 L874.85,488.58" stroke="#3C98D4" stroke-width="1.5" fill="none"/>
<path d="M788.76,488.58 L740.94,488.58" stroke="#3C98D4" stroke-width="1.5" fill="none"/>
<path d="M788.76,507.71 L788.76,536.40" stroke="#3C98D4" stroke-width="1.5" fill="none"/>
<path d="M788.76,555.53 L893.98,555.53" stroke="#3C98D4" stroke-width="1.5" fill="none"/>
<path d="M922.67,555.53 L951.37,555.53" stroke="#3C98D4" stroke-width="1.5" fill="none"/>
<path d="M788.76,574.66 L788.76,593.79 L893.98,593.79 L893.98,574.66" stroke="#3C98D4" stroke-width="1.5" fill="none"/>
<path d="M836.59,593.79 L836.59,603.36" stroke="#3C98D4" stroke-width="1.5" fill="none"/>
<path d="M836.59,622.49 L750.50,622.49" stroke="#3C98D4" stroke-width="1.5" fill="none"/>
<path d="M553.94,287.71 H563.04 M563.04,273.71 V301.31 M568.04,273.91 V301.11 M568.04,273.91 H578.34 V273.08 M568.04,287.71 H574.04 M568.04,300.91 H578.34 V302.34 M568.04,276.71 H572.64" stroke="#2DB35A" stroke-width="1.2" fill="none"/>
<path d="M506.12,364.24 H515.21 M515.21,350.24 V377.84 M520.21,350.44 V377.63 M520.21,350.44 H530.51 V349.61 M520.21,364.24 H526.21 M520.21,377.44 H530.51 V378.87 M520.21,353.24 H524.81" stroke="#2DB35A" stroke-width="1.2" fill="none"/>
<path d="M660.12,364.24 H651.02 M651.02,350.24 V377.84 M646.02,350.44 V377.63 M646.02,350.44 H635.72 V349.61 M646.02,364.24 H640.02 M646.02,377.44 H635.72 V378.87 M646.02,353.24 H641.42" stroke="#2DB35A" stroke-width="1.2" fill="none"/>
<path d="M611.33,421.62 H620.42 M620.42,407.62 V435.23 M625.42,407.82 V435.02 M625.42,407.82 H635.72 V407.00 M625.42,421.62 H631.42 M625.42,434.82 H635.72 V436.25 M625.42,410.62 H630.02" stroke="#2DB35A" stroke-width="1.2" fill="none"/>
<path d="M611.33,488.58 H620.42 M620.42,474.58 V502.18 M625.42,474.78 V501.98 M625.42,474.78 H635.72 V473.95 M625.42,488.58 H631.42 M625.42,501.78 H635.72 V503.21" stroke="#2DB35A" stroke-width="1.2" fill="none"/>
<path d="M506.12,555.53 H515.21 M515.21,541.53 V569.13 M520.21,541.74 V568.93 M520.21,541.74 H530.51 V540.90 M520.21,555.53 H526.21 M520.21,568.74 H530.51 V570.16" stroke="#2DB35A" stroke-width="1.2" fill="none"/>
<path d="M660.12,555.53 H651.02 M651.02,541.53 V569.13 M646.02,541.74 V568.93 M646.02,541.74 H635.72 V540.90 M646.02,555.53 H640.02 M646.02,568.74 H635.72 V570.16" stroke="#2DB35A" stroke-width="1.2" fill="none"/>
<path d="M563.50,622.49 H572.60 M572.60,608.49 V636.09 M577.60,608.69 V635.89 M577.60,608.69 H587.90 V607.86 M577.60,622.49 H583.60 M577.60,635.69 H587.90 V637.12" stroke="#2DB35A" stroke-width="1.2" fill="none"/>
<path d="M860.99,230.32 H851.89 M851.89,216.32 V243.92 M846.89,216.52 V243.72 M846.89,216.52 H836.59 V215.69 M846.89,230.32 H840.89 M846.89,243.52 H836.59 V244.95 M846.89,219.32 H842.29" stroke="#2DB35A" stroke-width="1.2" fill="none"/>
<path d="M860.99,287.71 H851.89 M851.89,273.71 V301.31 M846.89,273.91 V301.11 M846.89,273.91 H836.59 V273.08 M846.89,287.71 H840.89 M846.89,300.91 H836.59 V302.34 M846.89,276.71 H842.29" stroke="#2DB35A" stroke-width="1.2" fill="none"/>
<path d="M764.37,364.24 H773.46 M773.46,350.24 V377.84 M778.46,350.44 V377.63 M778.46,350.44 H788.76 V349.61 M778.46,364.24 H784.46 M778.46,377.44 H788.76 V378.87 M778.46,353.24 H783.06" stroke="#2DB35A" stroke-width="1.2" fill="none"/>
<path d="M918.38,364.24 H909.28 M909.28,350.24 V377.84 M904.28,350.44 V377.63 M904.28,350.44 H893.98 V349.61 M904.28,364.24 H898.28 M904.28,377.44 H893.98 V378.87 M904.28,353.24 H899.68" stroke="#2DB35A" stroke-width="1.2" fill="none"/>
<path d="M813.16,421.62 H804.06 M804.06,407.62 V435.23 M799.06,407.82 V435.02 M799.06,407.82 H788.76 V407.00 M799.06,421.62 H793.06 M799.06,434.82 H788.76 V436.25 M799.06,410.62 H794.46" stroke="#2DB35A" stroke-width="1.2" fill="none"/>
<path d="M813.16,488.58 H804.06 M804.06,474.58 V502.18 M799.06,474.78 V501.98 M799.06,474.78 H788.76 V473.95 M799.06,488.58 H793.06 M799.06,501.78 H788.76 V503.21" stroke="#2DB35A" stroke-width="1.2" fill="none"/>
<path d="M764.37,555.53 H773.46 M773.46,541.53 V569.13 M778.46,541.74 V568.93 M778.46,541.74 H788.76 V540.90 M778.46,555.53 H784.46 M778.46,568.74 H788.76 V570.16" stroke="#2DB35A" stroke-width="1.2" fill="none"/>
<path d="M918.38,555.53 H909.28 M909.28,541.53 V569.13 M904.28,541.74 V568.93 M904.28,541.74 H893.98 V540.90 M904.28,555.53 H898.28 M904.28,568.74 H893.98 V570.16" stroke="#2DB35A" stroke-width="1.2" fill="none"/>
<path d="M860.99,622.49 H851.89 M851.89,608.49 V636.09 M846.89,608.69 V635.89 M846.89,608.69 H836.59 V607.86 M846.89,622.49 H840.89 M846.89,635.69 H836.59 V637.12" stroke="#2DB35A" stroke-width="1.2" fill="none"/>
<path d="M473.30,202.39 h10.2 l9,8.7 l-9,8.7 h-10.2z" fill="#FF1A00"/>
<text x="414.0" y="216.79" font-size="15.5" fill="#F01E0A" textLength="48.49" lengthAdjust="spacingAndGlyphs"  style="white-space:pre">VBIASP</text>
<path d="M473.30,221.52 h10.2 l9,8.7 l-9,8.7 h-10.2z" fill="#FF1A00"/>
<text x="414.0" y="235.92" font-size="15.5" fill="#F01E0A" textLength="48.49" lengthAdjust="spacingAndGlyphs"  style="white-space:pre">VBIASN</text>
<path d="M473.30,240.65 h10.2 l9,8.7 l-9,8.7 h-10.2z" fill="#FF1A00"/>
<text x="424.53" y="255.05" font-size="15.5" fill="#F01E0A" textLength="37.97" lengthAdjust="spacingAndGlyphs"  style="white-space:pre">MODE</text>
<path d="M473.30,259.78 h10.2 l9,8.7 l-9,8.7 h-10.2z" fill="#FF1A00"/>
<text x="416.93" y="274.19" font-size="15.5" fill="#F01E0A" textLength="45.57" lengthAdjust="spacingAndGlyphs"  style="white-space:pre">MODEb</text>
<path d="M463.10,191.50 l6.4,-8.5 h16.6 l6.4,8.5 l-6.4,8.5 h-16.6z" fill="#FF1A00"/>
<text x="434.02" y="197.1" font-size="15.5" fill="#F01E0A" textLength="22.78" lengthAdjust="spacingAndGlyphs"  style="white-space:pre">vdd</text>
<path d="M472.90,688.80 l6.4,-8.5 h16.6 l6.4,8.5 l-6.4,8.5 h-16.6z" fill="#FF1A00"/>
<text x="443.92" y="692.7" font-size="15.5" fill="#F01E0A" textLength="22.78" lengthAdjust="spacingAndGlyphs"  style="white-space:pre">vss</text>
<path d="M969.90,201.70 h10.2 l9,8.7 l-9,8.7 h-10.2z" fill="#FF1A00"/>
<text x="995" y="216.9" font-size="15.5" fill="#F01E0A" textLength="27.45" lengthAdjust="spacingAndGlyphs"  style="white-space:pre">OUT</text>
<path d="M969.90,220.95 h10.2 l9,8.7 l-9,8.7 h-10.2z" fill="#FF1A00"/>
<text x="995" y="235.9" font-size="15.5" fill="#F01E0A" textLength="35.04" lengthAdjust="spacingAndGlyphs"  style="white-space:pre">OUTb</text>
<path d="M405.90,441.20 h10.2 l9,8.7 l-9,8.7 h-10.2z" fill="#FF1A00"/>
<text x="383.5" y="455" font-size="15.5" fill="#F01E0A" textLength="11.90" lengthAdjust="spacingAndGlyphs"  style="white-space:pre">IN</text>
<path d="M1017.80,441.00 h-10.6 l-8.6,8.8 l8.6,8.8 h10.6z" fill="#FF1A00"/>
<text x="1027.6" y="455" font-size="15.5" fill="#F01E0A" textLength="19.49" lengthAdjust="spacingAndGlyphs"  style="white-space:pre">INb</text>
<text x="592.34" y="252.01" font-size="12" fill="#33997A" textLength="41.50" lengthAdjust="spacingAndGlyphs"  style="white-space:pre">"modp"</text>
<text x="592.34" y="265.01" font-size="12" fill="#33997A" textLength="29.55" lengthAdjust="spacingAndGlyphs"  style="white-space:pre">ng=1</text>
<text x="592.34" y="277.01" font-size="12" fill="#33997A" textLength="52.70" lengthAdjust="spacingAndGlyphs"  style="white-space:pre">l=plenght</text>
<text x="592.34" y="289.01" font-size="12" fill="#33997A" textLength="68.39" lengthAdjust="spacingAndGlyphs"  style="white-space:pre">wtot=pwidth</text>
<text x="544.51" y="328.54" font-size="12" fill="#33997A" textLength="41.50" lengthAdjust="spacingAndGlyphs"  style="white-space:pre">"modp"</text>
<text x="544.51" y="341.54" font-size="12" fill="#33997A" textLength="29.55" lengthAdjust="spacingAndGlyphs"  style="white-space:pre">ng=1</text>
<text x="544.51" y="353.54" font-size="12" fill="#33997A" textLength="52.70" lengthAdjust="spacingAndGlyphs"  style="white-space:pre">l=plenght</text>
<text x="544.51" y="365.54" font-size="12" fill="#33997A" textLength="68.39" lengthAdjust="spacingAndGlyphs"  style="white-space:pre">wtot=pwidth</text>
<text x="580.22" y="328.54" font-size="12" fill="#33997A" textLength="41.50" lengthAdjust="spacingAndGlyphs"  style="white-space:pre">"modp"</text>
<text x="592.18" y="341.54" font-size="12" fill="#33997A" textLength="29.55" lengthAdjust="spacingAndGlyphs"  style="white-space:pre">ng=1</text>
<text x="569.02" y="353.54" font-size="12" fill="#33997A" textLength="52.70" lengthAdjust="spacingAndGlyphs"  style="white-space:pre">l=plenght</text>
<text x="553.33" y="365.54" font-size="12" fill="#33997A" textLength="68.39" lengthAdjust="spacingAndGlyphs"  style="white-space:pre">wtot=pwidth</text>
<text x="649.72" y="385.93" font-size="12" fill="#33997A" textLength="41.50" lengthAdjust="spacingAndGlyphs"  style="white-space:pre">"modp"</text>
<text x="649.72" y="398.93" font-size="12" fill="#33997A" textLength="29.55" lengthAdjust="spacingAndGlyphs"  style="white-space:pre">ng=1</text>
<text x="649.72" y="410.93" font-size="12" fill="#33997A" textLength="52.70" lengthAdjust="spacingAndGlyphs"  style="white-space:pre">l=plenght</text>
<text x="649.72" y="422.93" font-size="12" fill="#33997A" textLength="68.39" lengthAdjust="spacingAndGlyphs"  style="white-space:pre">wtot=pwidth</text>
<text x="649.22" y="499.08" font-size="12" fill="#33997A" textLength="68.39" lengthAdjust="spacingAndGlyphs"  style="white-space:pre">wtot=nwidth</text>
<text x="649.22" y="509.08" font-size="12" fill="#33997A" textLength="52.70" lengthAdjust="spacingAndGlyphs"  style="white-space:pre">l=nlenght</text>
<text x="649.22" y="518.58" font-size="12" fill="#33997A" textLength="29.55" lengthAdjust="spacingAndGlyphs"  style="white-space:pre">ng=1</text>
<text x="649.22" y="527.58" font-size="12" fill="#33997A" textLength="41.50" lengthAdjust="spacingAndGlyphs"  style="white-space:pre">"modn"</text>
<text x="544.01" y="566.03" font-size="12" fill="#33997A" textLength="68.39" lengthAdjust="spacingAndGlyphs"  style="white-space:pre">wtot=nwidth</text>
<text x="544.01" y="576.03" font-size="12" fill="#33997A" textLength="52.70" lengthAdjust="spacingAndGlyphs"  style="white-space:pre">l=nlenght</text>
<text x="544.01" y="585.53" font-size="12" fill="#33997A" textLength="29.55" lengthAdjust="spacingAndGlyphs"  style="white-space:pre">ng=1</text>
<text x="544.01" y="594.53" font-size="12" fill="#33997A" textLength="41.50" lengthAdjust="spacingAndGlyphs"  style="white-space:pre">"modn"</text>
<text x="553.83" y="566.03" font-size="12" fill="#33997A" textLength="68.39" lengthAdjust="spacingAndGlyphs"  style="white-space:pre">wtot=nwidth</text>
<text x="569.52" y="576.03" font-size="12" fill="#33997A" textLength="52.70" lengthAdjust="spacingAndGlyphs"  style="white-space:pre">l=nlenght</text>
<text x="592.68" y="585.53" font-size="12" fill="#33997A" textLength="29.55" lengthAdjust="spacingAndGlyphs"  style="white-space:pre">ng=1</text>
<text x="580.72" y="594.53" font-size="12" fill="#33997A" textLength="41.50" lengthAdjust="spacingAndGlyphs"  style="white-space:pre">"modn"</text>
<text x="601.4" y="632.99" font-size="12" fill="#33997A" textLength="68.39" lengthAdjust="spacingAndGlyphs"  style="white-space:pre">wtot=nwidth</text>
<text x="601.4" y="642.99" font-size="12" fill="#33997A" textLength="52.70" lengthAdjust="spacingAndGlyphs"  style="white-space:pre">l=nlenght</text>
<text x="601.4" y="652.49" font-size="12" fill="#33997A" textLength="29.55" lengthAdjust="spacingAndGlyphs"  style="white-space:pre">ng=1</text>
<text x="601.4" y="661.49" font-size="12" fill="#33997A" textLength="41.50" lengthAdjust="spacingAndGlyphs"  style="white-space:pre">"modn"</text>
<text x="781.09" y="194.62" font-size="12" fill="#33997A" textLength="41.50" lengthAdjust="spacingAndGlyphs"  style="white-space:pre">"modp"</text>
<text x="793.04" y="207.62" font-size="12" fill="#33997A" textLength="29.55" lengthAdjust="spacingAndGlyphs"  style="white-space:pre">ng=1</text>
<text x="769.88" y="219.62" font-size="12" fill="#33997A" textLength="52.70" lengthAdjust="spacingAndGlyphs"  style="white-space:pre">l=plenght</text>
<text x="754.2" y="231.62" font-size="12" fill="#33997A" textLength="68.39" lengthAdjust="spacingAndGlyphs"  style="white-space:pre">wtot=pwidth</text>
<text x="781.09" y="252.01" font-size="12" fill="#33997A" textLength="41.50" lengthAdjust="spacingAndGlyphs"  style="white-space:pre">"modp"</text>
<text x="793.04" y="265.01" font-size="12" fill="#33997A" textLength="29.55" lengthAdjust="spacingAndGlyphs"  style="white-space:pre">ng=1</text>
<text x="769.88" y="277.01" font-size="12" fill="#33997A" textLength="52.70" lengthAdjust="spacingAndGlyphs"  style="white-space:pre">l=plenght</text>
<text x="754.2" y="289.01" font-size="12" fill="#33997A" textLength="68.39" lengthAdjust="spacingAndGlyphs"  style="white-space:pre">wtot=pwidth</text>
<text x="802.76" y="328.54" font-size="12" fill="#33997A" textLength="41.50" lengthAdjust="spacingAndGlyphs"  style="white-space:pre">"modp"</text>
<text x="802.76" y="341.54" font-size="12" fill="#33997A" textLength="29.55" lengthAdjust="spacingAndGlyphs"  style="white-space:pre">ng=1</text>
<text x="802.76" y="353.54" font-size="12" fill="#33997A" textLength="52.70" lengthAdjust="spacingAndGlyphs"  style="white-space:pre">l=plenght</text>
<text x="802.76" y="365.54" font-size="12" fill="#33997A" textLength="68.39" lengthAdjust="spacingAndGlyphs"  style="white-space:pre">wtot=pwidth</text>
<text x="838.48" y="328.54" font-size="12" fill="#33997A" textLength="41.50" lengthAdjust="spacingAndGlyphs"  style="white-space:pre">"modp"</text>
<text x="850.43" y="341.54" font-size="12" fill="#33997A" textLength="29.55" lengthAdjust="spacingAndGlyphs"  style="white-space:pre">ng=1</text>
<text x="827.27" y="353.54" font-size="12" fill="#33997A" textLength="52.70" lengthAdjust="spacingAndGlyphs"  style="white-space:pre">l=plenght</text>
<text x="811.59" y="365.54" font-size="12" fill="#33997A" textLength="68.39" lengthAdjust="spacingAndGlyphs"  style="white-space:pre">wtot=pwidth</text>
<text x="733.26" y="385.93" font-size="12" fill="#33997A" textLength="41.50" lengthAdjust="spacingAndGlyphs"  style="white-space:pre">"modp"</text>
<text x="745.22" y="398.93" font-size="12" fill="#33997A" textLength="29.55" lengthAdjust="spacingAndGlyphs"  style="white-space:pre">ng=1</text>
<text x="722.06" y="410.93" font-size="12" fill="#33997A" textLength="52.70" lengthAdjust="spacingAndGlyphs"  style="white-space:pre">l=plenght</text>
<text x="706.37" y="422.93" font-size="12" fill="#33997A" textLength="68.39" lengthAdjust="spacingAndGlyphs"  style="white-space:pre">wtot=pwidth</text>
<text x="706.87" y="499.08" font-size="12" fill="#33997A" textLength="68.39" lengthAdjust="spacingAndGlyphs"  style="white-space:pre">wtot=nwidth</text>
<text x="722.56" y="509.08" font-size="12" fill="#33997A" textLength="52.70" lengthAdjust="spacingAndGlyphs"  style="white-space:pre">l=nlenght</text>
<text x="745.72" y="518.58" font-size="12" fill="#33997A" textLength="29.55" lengthAdjust="spacingAndGlyphs"  style="white-space:pre">ng=1</text>
<text x="733.76" y="527.58" font-size="12" fill="#33997A" textLength="41.50" lengthAdjust="spacingAndGlyphs"  style="white-space:pre">"modn"</text>
<text x="802.26" y="566.03" font-size="12" fill="#33997A" textLength="68.39" lengthAdjust="spacingAndGlyphs"  style="white-space:pre">wtot=nwidth</text>
<text x="802.26" y="576.03" font-size="12" fill="#33997A" textLength="52.70" lengthAdjust="spacingAndGlyphs"  style="white-space:pre">l=nlenght</text>
<text x="802.26" y="585.53" font-size="12" fill="#33997A" textLength="29.55" lengthAdjust="spacingAndGlyphs"  style="white-space:pre">ng=1</text>
<text x="802.26" y="594.53" font-size="12" fill="#33997A" textLength="41.50" lengthAdjust="spacingAndGlyphs"  style="white-space:pre">"modn"</text>
<text x="812.09" y="566.03" font-size="12" fill="#33997A" textLength="68.39" lengthAdjust="spacingAndGlyphs"  style="white-space:pre">wtot=nwidth</text>
<text x="827.77" y="576.03" font-size="12" fill="#33997A" textLength="52.70" lengthAdjust="spacingAndGlyphs"  style="white-space:pre">l=nlenght</text>
<text x="850.93" y="585.53" font-size="12" fill="#33997A" textLength="29.55" lengthAdjust="spacingAndGlyphs"  style="white-space:pre">ng=1</text>
<text x="838.98" y="594.53" font-size="12" fill="#33997A" textLength="41.50" lengthAdjust="spacingAndGlyphs"  style="white-space:pre">"modn"</text>
<text x="754.7" y="632.99" font-size="12" fill="#33997A" textLength="68.39" lengthAdjust="spacingAndGlyphs"  style="white-space:pre">wtot=nwidth</text>
<text x="770.38" y="642.99" font-size="12" fill="#33997A" textLength="52.70" lengthAdjust="spacingAndGlyphs"  style="white-space:pre">l=nlenght</text>
<text x="793.54" y="652.49" font-size="12" fill="#33997A" textLength="29.55" lengthAdjust="spacingAndGlyphs"  style="white-space:pre">ng=1</text>
<text x="781.59" y="661.49" font-size="12" fill="#33997A" textLength="41.50" lengthAdjust="spacingAndGlyphs"  style="white-space:pre">"modn"</text>
<text x="557.71" y="262.71" font-size="11.5" fill="#E6D8BC" textLength="17.93" lengthAdjust="spacingAndGlyphs"  style="white-space:pre">vdd</text>
<text x="534.48" y="285.21" font-size="11.5" fill="#E6D8BC" textLength="9.36" lengthAdjust="spacingAndGlyphs"  style="white-space:pre">IN</text>
<text x="581.63" y="297.21" font-size="11.5" fill="#E6D8BC" textLength="17.93" lengthAdjust="spacingAndGlyphs"  style="white-space:pre">vdd</text>
<text x="546.99" y="307.91" font-size="7.2" fill="#ECE21C" textLength="23.65" lengthAdjust="spacingAndGlyphs"  style="white-space:pre">pmos4</text>
<text x="588.63" y="308.71" font-size="11.7" fill="#EE2A1A" textLength="22.26" lengthAdjust="spacingAndGlyphs"  style="white-space:pre">MP1</text>
<text x="553.78" y="316.91" font-size="11.5" fill="#E6D8BC" textLength="22.75" lengthAdjust="spacingAndGlyphs"  style="white-space:pre">net7</text>
<text x="505.06" y="339.24" font-size="11.5" fill="#E6D8BC" textLength="22.75" lengthAdjust="spacingAndGlyphs"  style="white-space:pre">net7</text>
<text x="457.86" y="361.74" font-size="11.5" fill="#E6D8BC" textLength="38.16" lengthAdjust="spacingAndGlyphs"  style="white-space:pre">VBIASP</text>
<text x="533.81" y="373.74" font-size="11.5" fill="#E6D8BC" textLength="17.93" lengthAdjust="spacingAndGlyphs"  style="white-space:pre">vdd</text>
<text x="499.16" y="384.44" font-size="7.2" fill="#ECE21C" textLength="23.65" lengthAdjust="spacingAndGlyphs"  style="white-space:pre">pmos4</text>
<text x="540.81" y="385.24" font-size="11.7" fill="#EE2A1A" textLength="22.26" lengthAdjust="spacingAndGlyphs"  style="white-space:pre">MP3</text>
<text x="501.13" y="393.44" font-size="11.5" fill="#E6D8BC" textLength="27.58" lengthAdjust="spacingAndGlyphs"  style="white-space:pre">OUTb</text>
<text x="636.82" y="340.24" font-size="11.5" fill="#E6D8BC" textLength="22.75" lengthAdjust="spacingAndGlyphs"  style="white-space:pre">net7</text>
<text x="669.02" y="360.24" font-size="11.5" fill="#E6D8BC" textLength="21.60" lengthAdjust="spacingAndGlyphs"  style="white-space:pre">OUT</text>
<text x="613.0" y="374.34" font-size="11.5" fill="#E6D8BC" textLength="17.93" lengthAdjust="spacingAndGlyphs"  style="white-space:pre">vdd</text>
<text x="642.62" y="384.94" font-size="7.2" fill="#ECE21C" textLength="23.65" lengthAdjust="spacingAndGlyphs"  style="white-space:pre">pmos4</text>
<text x="601.76" y="386.04" font-size="11.7" fill="#EE2A1A" textLength="22.26" lengthAdjust="spacingAndGlyphs"  style="white-space:pre">MP4</text>
<text x="636.82" y="392.94" font-size="11.5" fill="#E6D8BC" textLength="29.23" lengthAdjust="spacingAndGlyphs"  style="white-space:pre">net35</text>
<text x="603.79" y="396.62" font-size="11.5" fill="#E6D8BC" textLength="29.23" lengthAdjust="spacingAndGlyphs"  style="white-space:pre">net35</text>
<text x="565.37" y="419.12" font-size="11.5" fill="#E6D8BC" textLength="35.86" lengthAdjust="spacingAndGlyphs"  style="white-space:pre">MODEb</text>
<text x="639.02" y="431.12" font-size="11.5" fill="#E6D8BC" textLength="17.93" lengthAdjust="spacingAndGlyphs"  style="white-space:pre">vdd</text>
<text x="604.37" y="441.82" font-size="7.2" fill="#ECE21C" textLength="23.65" lengthAdjust="spacingAndGlyphs"  style="white-space:pre">pmos4</text>
<text x="646.02" y="442.62" font-size="11.7" fill="#EE2A1A" textLength="22.26" lengthAdjust="spacingAndGlyphs"  style="white-space:pre">MP5</text>
<text x="606.35" y="450.82" font-size="11.5" fill="#E6D8BC" textLength="27.58" lengthAdjust="spacingAndGlyphs"  style="white-space:pre">OUTb</text>
<text x="606.15" y="462.58" font-size="11.5" fill="#E6D8BC" textLength="27.58" lengthAdjust="spacingAndGlyphs"  style="white-space:pre">OUTb</text>
<text x="571.25" y="493.58" font-size="11.5" fill="#E6D8BC" textLength="29.88" lengthAdjust="spacingAndGlyphs"  style="white-space:pre">MODE</text>
<text x="646.72" y="488.28" font-size="11.5" fill="#E6D8BC" textLength="17.93" lengthAdjust="spacingAndGlyphs"  style="white-space:pre">vss</text>
<text x="605.67" y="473.08" font-size="7.2" fill="#ECE21C" textLength="23.65" lengthAdjust="spacingAndGlyphs"  style="white-space:pre">nmos4</text>
<text x="652.72" y="473.08" font-size="11.7" fill="#EE2A1A" textLength="22.26" lengthAdjust="spacingAndGlyphs"  style="white-space:pre">MN1</text>
<text x="604.99" y="518.58" font-size="11.5" fill="#E6D8BC" textLength="29.23" lengthAdjust="spacingAndGlyphs"  style="white-space:pre">net34</text>
<text x="500.93" y="529.53" font-size="11.5" fill="#E6D8BC" textLength="27.58" lengthAdjust="spacingAndGlyphs"  style="white-space:pre">OUTb</text>
<text x="457.75" y="560.53" font-size="11.5" fill="#E6D8BC" textLength="38.16" lengthAdjust="spacingAndGlyphs"  style="white-space:pre">VBIASN</text>
<text x="541.51" y="555.24" font-size="11.5" fill="#E6D8BC" textLength="17.93" lengthAdjust="spacingAndGlyphs"  style="white-space:pre">vss</text>
<text x="500.46" y="540.03" font-size="7.2" fill="#ECE21C" textLength="23.65" lengthAdjust="spacingAndGlyphs"  style="white-space:pre">nmos4</text>
<text x="547.51" y="540.03" font-size="11.7" fill="#EE2A1A" textLength="22.26" lengthAdjust="spacingAndGlyphs"  style="white-space:pre">MN0</text>
<text x="506.26" y="585.53" font-size="11.5" fill="#E6D8BC" textLength="22.75" lengthAdjust="spacingAndGlyphs"  style="white-space:pre">net8</text>
<text x="637.72" y="529.53" font-size="11.5" fill="#E6D8BC" textLength="29.23" lengthAdjust="spacingAndGlyphs"  style="white-space:pre">net34</text>
<text x="670.32" y="560.53" font-size="11.5" fill="#E6D8BC" textLength="21.60" lengthAdjust="spacingAndGlyphs"  style="white-space:pre">OUT</text>
<text x="606.8" y="555.24" font-size="11.5" fill="#E6D8BC" textLength="17.93" lengthAdjust="spacingAndGlyphs"  style="white-space:pre">vss</text>
<text x="642.12" y="540.03" font-size="7.2" fill="#ECE21C" textLength="23.65" lengthAdjust="spacingAndGlyphs"  style="white-space:pre">nmos4</text>
<text x="596.46" y="540.03" font-size="11.7" fill="#EE2A1A" textLength="22.26" lengthAdjust="spacingAndGlyphs"  style="white-space:pre">MN2</text>
<text x="637.22" y="585.53" font-size="11.5" fill="#E6D8BC" textLength="22.75" lengthAdjust="spacingAndGlyphs"  style="white-space:pre">net8</text>
<text x="563.15" y="596.49" font-size="11.5" fill="#E6D8BC" textLength="22.75" lengthAdjust="spacingAndGlyphs"  style="white-space:pre">net8</text>
<text x="543.94" y="627.49" font-size="11.5" fill="#E6D8BC" textLength="9.36" lengthAdjust="spacingAndGlyphs"  style="white-space:pre">IN</text>
<text x="598.9" y="622.19" font-size="11.5" fill="#E6D8BC" textLength="17.93" lengthAdjust="spacingAndGlyphs"  style="white-space:pre">vss</text>
<text x="557.85" y="606.99" font-size="7.2" fill="#ECE21C" textLength="23.65" lengthAdjust="spacingAndGlyphs"  style="white-space:pre">nmos4</text>
<text x="604.9" y="606.99" font-size="11.7" fill="#EE2A1A" textLength="22.26" lengthAdjust="spacingAndGlyphs"  style="white-space:pre">MN3</text>
<text x="568.47" y="652.49" font-size="11.5" fill="#E6D8BC" textLength="17.93" lengthAdjust="spacingAndGlyphs"  style="white-space:pre">vss</text>
<text x="837.69" y="206.32" font-size="11.5" fill="#E6D8BC" textLength="17.93" lengthAdjust="spacingAndGlyphs"  style="white-space:pre">vdd</text>
<text x="869.88" y="226.32" font-size="11.5" fill="#E6D8BC" textLength="35.86" lengthAdjust="spacingAndGlyphs"  style="white-space:pre">MODEb</text>
<text x="813.86" y="240.42" font-size="11.5" fill="#E6D8BC" textLength="17.93" lengthAdjust="spacingAndGlyphs"  style="white-space:pre">vdd</text>
<text x="843.49" y="251.02" font-size="7.2" fill="#ECE21C" textLength="23.65" lengthAdjust="spacingAndGlyphs"  style="white-space:pre">pmos4</text>
<text x="802.62" y="252.12" font-size="11.7" fill="#EE2A1A" textLength="22.26" lengthAdjust="spacingAndGlyphs"  style="white-space:pre">MP2</text>
<text x="837.69" y="262.32" font-size="11.5" fill="#E6D8BC" textLength="29.23" lengthAdjust="spacingAndGlyphs"  style="white-space:pre">net33</text>
<text x="837.69" y="262.71" font-size="11.5" fill="#E6D8BC" textLength="29.23" lengthAdjust="spacingAndGlyphs"  style="white-space:pre">net33</text>
<text x="869.88" y="283.71" font-size="11.5" fill="#E6D8BC" textLength="15.34" lengthAdjust="spacingAndGlyphs"  style="white-space:pre">INb</text>
<text x="813.86" y="297.81" font-size="11.5" fill="#E6D8BC" textLength="17.93" lengthAdjust="spacingAndGlyphs"  style="white-space:pre">vdd</text>
<text x="843.49" y="308.41" font-size="7.2" fill="#ECE21C" textLength="23.65" lengthAdjust="spacingAndGlyphs"  style="white-space:pre">pmos4</text>
<text x="802.62" y="309.51" font-size="11.7" fill="#EE2A1A" textLength="22.26" lengthAdjust="spacingAndGlyphs"  style="white-space:pre">MP0</text>
<text x="837.69" y="316.41" font-size="11.5" fill="#E6D8BC" textLength="29.23" lengthAdjust="spacingAndGlyphs"  style="white-space:pre">net14</text>
<text x="756.83" y="339.24" font-size="11.5" fill="#E6D8BC" textLength="29.23" lengthAdjust="spacingAndGlyphs"  style="white-space:pre">net14</text>
<text x="726.69" y="361.74" font-size="11.5" fill="#E6D8BC" textLength="27.58" lengthAdjust="spacingAndGlyphs"  style="white-space:pre">OUTb</text>
<text x="792.06" y="373.74" font-size="11.5" fill="#E6D8BC" textLength="17.93" lengthAdjust="spacingAndGlyphs"  style="white-space:pre">vdd</text>
<text x="757.41" y="384.44" font-size="7.2" fill="#ECE21C" textLength="23.65" lengthAdjust="spacingAndGlyphs"  style="white-space:pre">pmos4</text>
<text x="799.06" y="385.24" font-size="11.7" fill="#EE2A1A" textLength="22.26" lengthAdjust="spacingAndGlyphs"  style="white-space:pre">MP8</text>
<text x="757.73" y="393.44" font-size="11.5" fill="#E6D8BC" textLength="29.23" lengthAdjust="spacingAndGlyphs"  style="white-space:pre">net32</text>
<text x="895.08" y="340.24" font-size="11.5" fill="#E6D8BC" textLength="29.23" lengthAdjust="spacingAndGlyphs"  style="white-space:pre">net14</text>
<text x="927.28" y="360.24" font-size="11.5" fill="#E6D8BC" textLength="38.16" lengthAdjust="spacingAndGlyphs"  style="white-space:pre">VBIASP</text>
<text x="871.25" y="374.34" font-size="11.5" fill="#E6D8BC" textLength="17.93" lengthAdjust="spacingAndGlyphs"  style="white-space:pre">vdd</text>
<text x="900.88" y="384.94" font-size="7.2" fill="#ECE21C" textLength="23.65" lengthAdjust="spacingAndGlyphs"  style="white-space:pre">pmos4</text>
<text x="860.01" y="386.04" font-size="11.7" fill="#EE2A1A" textLength="22.26" lengthAdjust="spacingAndGlyphs"  style="white-space:pre">MP7</text>
<text x="895.08" y="392.94" font-size="11.5" fill="#E6D8BC" textLength="21.60" lengthAdjust="spacingAndGlyphs"  style="white-space:pre">OUT</text>
<text x="789.86" y="397.62" font-size="11.5" fill="#E6D8BC" textLength="29.23" lengthAdjust="spacingAndGlyphs"  style="white-space:pre">net32</text>
<text x="822.06" y="417.62" font-size="11.5" fill="#E6D8BC" textLength="35.86" lengthAdjust="spacingAndGlyphs"  style="white-space:pre">MODEb</text>
<text x="766.04" y="431.73" font-size="11.5" fill="#E6D8BC" textLength="17.93" lengthAdjust="spacingAndGlyphs"  style="white-space:pre">vdd</text>
<text x="795.66" y="442.32" font-size="7.2" fill="#ECE21C" textLength="23.65" lengthAdjust="spacingAndGlyphs"  style="white-space:pre">pmos4</text>
<text x="754.8" y="443.43" font-size="11.7" fill="#EE2A1A" textLength="22.26" lengthAdjust="spacingAndGlyphs"  style="white-space:pre">MP6</text>
<text x="789.86" y="450.32" font-size="11.5" fill="#E6D8BC" textLength="21.60" lengthAdjust="spacingAndGlyphs"  style="white-space:pre">OUT</text>
<text x="790.76" y="462.58" font-size="11.5" fill="#E6D8BC" textLength="21.60" lengthAdjust="spacingAndGlyphs"  style="white-space:pre">OUT</text>
<text x="823.36" y="493.58" font-size="11.5" fill="#E6D8BC" textLength="29.88" lengthAdjust="spacingAndGlyphs"  style="white-space:pre">MODE</text>
<text x="759.84" y="488.28" font-size="11.5" fill="#E6D8BC" textLength="17.93" lengthAdjust="spacingAndGlyphs"  style="white-space:pre">vss</text>
<text x="795.16" y="473.08" font-size="7.2" fill="#ECE21C" textLength="23.65" lengthAdjust="spacingAndGlyphs"  style="white-space:pre">nmos4</text>
<text x="749.5" y="473.08" font-size="11.7" fill="#EE2A1A" textLength="22.26" lengthAdjust="spacingAndGlyphs"  style="white-space:pre">MN7</text>
<text x="790.26" y="518.58" font-size="11.5" fill="#E6D8BC" textLength="29.23" lengthAdjust="spacingAndGlyphs"  style="white-space:pre">net31</text>
<text x="757.53" y="529.53" font-size="11.5" fill="#E6D8BC" textLength="29.23" lengthAdjust="spacingAndGlyphs"  style="white-space:pre">net31</text>
<text x="726.59" y="560.53" font-size="11.5" fill="#E6D8BC" textLength="27.58" lengthAdjust="spacingAndGlyphs"  style="white-space:pre">OUTb</text>
<text x="799.76" y="555.24" font-size="11.5" fill="#E6D8BC" textLength="17.93" lengthAdjust="spacingAndGlyphs"  style="white-space:pre">vss</text>
<text x="758.71" y="540.03" font-size="7.2" fill="#ECE21C" textLength="23.65" lengthAdjust="spacingAndGlyphs"  style="white-space:pre">nmos4</text>
<text x="805.76" y="540.03" font-size="11.7" fill="#EE2A1A" textLength="22.26" lengthAdjust="spacingAndGlyphs"  style="white-space:pre">MN5</text>
<text x="758.03" y="585.53" font-size="11.5" fill="#E6D8BC" textLength="29.23" lengthAdjust="spacingAndGlyphs"  style="white-space:pre">net13</text>
<text x="895.98" y="529.53" font-size="11.5" fill="#E6D8BC" textLength="21.60" lengthAdjust="spacingAndGlyphs"  style="white-space:pre">OUT</text>
<text x="928.58" y="560.53" font-size="11.5" fill="#E6D8BC" textLength="38.16" lengthAdjust="spacingAndGlyphs"  style="white-space:pre">VBIASN</text>
<text x="865.05" y="555.24" font-size="11.5" fill="#E6D8BC" textLength="17.93" lengthAdjust="spacingAndGlyphs"  style="white-space:pre">vss</text>
<text x="900.38" y="540.03" font-size="7.2" fill="#ECE21C" textLength="23.65" lengthAdjust="spacingAndGlyphs"  style="white-space:pre">nmos4</text>
<text x="854.72" y="540.03" font-size="11.7" fill="#EE2A1A" textLength="22.26" lengthAdjust="spacingAndGlyphs"  style="white-space:pre">MN6</text>
<text x="895.48" y="585.53" font-size="11.5" fill="#E6D8BC" textLength="29.23" lengthAdjust="spacingAndGlyphs"  style="white-space:pre">net13</text>
<text x="838.59" y="596.49" font-size="11.5" fill="#E6D8BC" textLength="29.23" lengthAdjust="spacingAndGlyphs"  style="white-space:pre">net13</text>
<text x="871.18" y="627.49" font-size="11.5" fill="#E6D8BC" textLength="15.34" lengthAdjust="spacingAndGlyphs"  style="white-space:pre">INb</text>
<text x="807.66" y="622.19" font-size="11.5" fill="#E6D8BC" textLength="17.93" lengthAdjust="spacingAndGlyphs"  style="white-space:pre">vss</text>
<text x="842.99" y="606.99" font-size="7.2" fill="#ECE21C" textLength="23.65" lengthAdjust="spacingAndGlyphs"  style="white-space:pre">nmos4</text>
<text x="797.32" y="606.99" font-size="11.7" fill="#EE2A1A" textLength="22.26" lengthAdjust="spacingAndGlyphs"  style="white-space:pre">MN4</text>
<text x="838.09" y="652.49" font-size="11.5" fill="#E6D8BC" textLength="17.93" lengthAdjust="spacingAndGlyphs"  style="white-space:pre">vss</text>
<text x="691" y="166.5" font-size="14" fill="#4A9EE0" textLength="22.16" lengthAdjust="spacingAndGlyphs"  style="white-space:pre">vdd</text>
<text x="585.3" y="280.9" font-size="14" fill="#4A9EE0" textLength="22.16" lengthAdjust="spacingAndGlyphs"  style="white-space:pre">vdd</text>
<text x="574.4" y="358.6" font-size="14" fill="#4A9EE0" textLength="22.16" lengthAdjust="spacingAndGlyphs"  style="white-space:pre">vdd</text>
<text x="448.6" y="357.3" font-size="14" fill="#4A9EE0" textLength="47.17" lengthAdjust="spacingAndGlyphs"  style="white-space:pre">VBIASP</text>
<text x="546" y="415.5" font-size="14" fill="#4A9EE0" textLength="44.32" lengthAdjust="spacingAndGlyphs"  style="white-space:pre">MODEb</text>
<text x="652" y="416" font-size="14" fill="#4A9EE0" textLength="22.16" lengthAdjust="spacingAndGlyphs"  style="white-space:pre">vdd</text>
<text x="560.8" y="453" font-size="14" fill="#4A9EE0" textLength="34.09" lengthAdjust="spacingAndGlyphs"  style="white-space:pre">OUTb</text>
<text x="560.2" y="482" font-size="14" fill="#4A9EE0" textLength="36.94" lengthAdjust="spacingAndGlyphs"  style="white-space:pre">MODE</text>
<text x="653" y="482.2" font-size="14" fill="#4A9EE0" textLength="22.16" lengthAdjust="spacingAndGlyphs"  style="white-space:pre">vss</text>
<text x="448.6" y="549" font-size="14" fill="#4A9EE0" textLength="47.17" lengthAdjust="spacingAndGlyphs"  style="white-space:pre">VBIASN</text>
<text x="576.6" y="549" font-size="14" fill="#4A9EE0" textLength="22.16" lengthAdjust="spacingAndGlyphs"  style="white-space:pre">vss</text>
<text x="606" y="616" font-size="14" fill="#4A9EE0" textLength="22.16" lengthAdjust="spacingAndGlyphs"  style="white-space:pre">vss</text>
<text x="691" y="692.5" font-size="14" fill="#4A9EE0" textLength="22.16" lengthAdjust="spacingAndGlyphs"  style="white-space:pre">vss</text>
<text x="784.4" y="225.4" font-size="14" fill="#4A9EE0" textLength="22.16" lengthAdjust="spacingAndGlyphs"  style="white-space:pre">vdd</text>
<text x="870" y="223.7" font-size="14" fill="#4A9EE0" textLength="44.32" lengthAdjust="spacingAndGlyphs"  style="white-space:pre">MODEb</text>
<text x="784.4" y="282.2" font-size="14" fill="#4A9EE0" textLength="22.16" lengthAdjust="spacingAndGlyphs"  style="white-space:pre">vdd</text>
<text x="819.5" y="358.5" font-size="14" fill="#4A9EE0" textLength="22.16" lengthAdjust="spacingAndGlyphs"  style="white-space:pre">vdd</text>
<text x="926.4" y="357.6" font-size="14" fill="#4A9EE0" textLength="47.17" lengthAdjust="spacingAndGlyphs"  style="white-space:pre">VBIASP</text>
<text x="743.6" y="417.5" font-size="14" fill="#4A9EE0" textLength="22.16" lengthAdjust="spacingAndGlyphs"  style="white-space:pre">vdd</text>
<text x="822.3" y="415.3" font-size="14" fill="#4A9EE0" textLength="44.32" lengthAdjust="spacingAndGlyphs"  style="white-space:pre">MODEb</text>
<text x="822.9" y="444" font-size="14" fill="#4A9EE0" textLength="26.70" lengthAdjust="spacingAndGlyphs"  style="white-space:pre">OUT</text>
<text x="826.5" y="482.3" font-size="14" fill="#4A9EE0" textLength="36.94" lengthAdjust="spacingAndGlyphs"  style="white-space:pre">MODE</text>
<text x="749.2" y="483.2" font-size="14" fill="#4A9EE0" textLength="22.16" lengthAdjust="spacingAndGlyphs"  style="white-space:pre">vss</text>
<text x="926.4" y="549" font-size="14" fill="#4A9EE0" textLength="47.17" lengthAdjust="spacingAndGlyphs"  style="white-space:pre">VBIASN</text>
<text x="835" y="549" font-size="14" fill="#4A9EE0" textLength="22.16" lengthAdjust="spacingAndGlyphs"  style="white-space:pre">vss</text>
<text x="777.3" y="616" font-size="14" fill="#4A9EE0" textLength="22.16" lengthAdjust="spacingAndGlyphs"  style="white-space:pre">vss</text>
<rect x="574.04" y="264.08" width="8.6" height="9" fill="#FF1A00"/>
<rect x="574.04" y="283.21" width="8.6" height="9" fill="#FF1A00"/>
<rect x="574.04" y="302.34" width="8.6" height="9" fill="#FF1A00"/>
<rect x="545.34" y="283.21" width="8.6" height="9" fill="#FF1A00"/>
<rect x="526.21" y="340.61" width="8.6" height="9" fill="#FF1A00"/>
<rect x="526.21" y="359.74" width="8.6" height="9" fill="#FF1A00"/>
<rect x="526.21" y="378.87" width="8.6" height="9" fill="#FF1A00"/>
<rect x="497.51" y="359.74" width="8.6" height="9" fill="#FF1A00"/>
<rect x="631.42" y="340.61" width="8.6" height="9" fill="#FF1A00"/>
<rect x="631.42" y="359.74" width="8.6" height="9" fill="#FF1A00"/>
<rect x="631.42" y="378.87" width="8.6" height="9" fill="#FF1A00"/>
<rect x="660.12" y="359.74" width="8.6" height="9" fill="#FF1A00"/>
<rect x="631.42" y="398.00" width="8.6" height="9" fill="#FF1A00"/>
<rect x="631.42" y="417.12" width="8.6" height="9" fill="#FF1A00"/>
<rect x="631.42" y="436.25" width="8.6" height="9" fill="#FF1A00"/>
<rect x="602.73" y="417.12" width="8.6" height="9" fill="#FF1A00"/>
<rect x="631.42" y="464.95" width="8.6" height="9" fill="#FF1A00"/>
<rect x="631.42" y="484.08" width="8.6" height="9" fill="#FF1A00"/>
<rect x="631.42" y="503.21" width="8.6" height="9" fill="#FF1A00"/>
<rect x="602.73" y="484.08" width="8.6" height="9" fill="#FF1A00"/>
<rect x="526.21" y="531.90" width="8.6" height="9" fill="#FF1A00"/>
<rect x="526.21" y="551.03" width="8.6" height="9" fill="#FF1A00"/>
<rect x="526.21" y="570.16" width="8.6" height="9" fill="#FF1A00"/>
<rect x="497.51" y="551.03" width="8.6" height="9" fill="#FF1A00"/>
<rect x="631.42" y="531.90" width="8.6" height="9" fill="#FF1A00"/>
<rect x="631.42" y="551.03" width="8.6" height="9" fill="#FF1A00"/>
<rect x="631.42" y="570.16" width="8.6" height="9" fill="#FF1A00"/>
<rect x="660.12" y="551.03" width="8.6" height="9" fill="#FF1A00"/>
<rect x="583.60" y="598.86" width="8.6" height="9" fill="#FF1A00"/>
<rect x="583.60" y="617.99" width="8.6" height="9" fill="#FF1A00"/>
<rect x="583.60" y="637.12" width="8.6" height="9" fill="#FF1A00"/>
<rect x="554.90" y="617.99" width="8.6" height="9" fill="#FF1A00"/>
<rect x="832.29" y="206.69" width="8.6" height="9" fill="#FF1A00"/>
<rect x="832.29" y="225.82" width="8.6" height="9" fill="#FF1A00"/>
<rect x="832.29" y="244.95" width="8.6" height="9" fill="#FF1A00"/>
<rect x="860.99" y="225.82" width="8.6" height="9" fill="#FF1A00"/>
<rect x="832.29" y="264.08" width="8.6" height="9" fill="#FF1A00"/>
<rect x="832.29" y="283.21" width="8.6" height="9" fill="#FF1A00"/>
<rect x="832.29" y="302.34" width="8.6" height="9" fill="#FF1A00"/>
<rect x="860.99" y="283.21" width="8.6" height="9" fill="#FF1A00"/>
<rect x="784.46" y="340.61" width="8.6" height="9" fill="#FF1A00"/>
<rect x="784.46" y="359.74" width="8.6" height="9" fill="#FF1A00"/>
<rect x="784.46" y="378.87" width="8.6" height="9" fill="#FF1A00"/>
<rect x="755.77" y="359.74" width="8.6" height="9" fill="#FF1A00"/>
<rect x="889.68" y="340.61" width="8.6" height="9" fill="#FF1A00"/>
<rect x="889.68" y="359.74" width="8.6" height="9" fill="#FF1A00"/>
<rect x="889.68" y="378.87" width="8.6" height="9" fill="#FF1A00"/>
<rect x="918.38" y="359.74" width="8.6" height="9" fill="#FF1A00"/>
<rect x="784.46" y="398.00" width="8.6" height="9" fill="#FF1A00"/>
<rect x="784.46" y="417.12" width="8.6" height="9" fill="#FF1A00"/>
<rect x="784.46" y="436.25" width="8.6" height="9" fill="#FF1A00"/>
<rect x="813.16" y="417.12" width="8.6" height="9" fill="#FF1A00"/>
<rect x="784.46" y="464.95" width="8.6" height="9" fill="#FF1A00"/>
<rect x="784.46" y="484.08" width="8.6" height="9" fill="#FF1A00"/>
<rect x="784.46" y="503.21" width="8.6" height="9" fill="#FF1A00"/>
<rect x="813.16" y="484.08" width="8.6" height="9" fill="#FF1A00"/>
<rect x="784.46" y="531.90" width="8.6" height="9" fill="#FF1A00"/>
<rect x="784.46" y="551.03" width="8.6" height="9" fill="#FF1A00"/>
<rect x="784.46" y="570.16" width="8.6" height="9" fill="#FF1A00"/>
<rect x="755.77" y="551.03" width="8.6" height="9" fill="#FF1A00"/>
<rect x="889.68" y="531.90" width="8.6" height="9" fill="#FF1A00"/>
<rect x="889.68" y="551.03" width="8.6" height="9" fill="#FF1A00"/>
<rect x="889.68" y="570.16" width="8.6" height="9" fill="#FF1A00"/>
<rect x="918.38" y="551.03" width="8.6" height="9" fill="#FF1A00"/>
<rect x="832.29" y="598.86" width="8.6" height="9" fill="#FF1A00"/>
<rect x="832.29" y="617.99" width="8.6" height="9" fill="#FF1A00"/>
<rect x="832.29" y="637.12" width="8.6" height="9" fill="#FF1A00"/>
<rect x="860.99" y="617.99" width="8.6" height="9" fill="#FF1A00"/>
<circle cx="578.34" cy="325.98" r="4.6" fill="#3CBBFA"/>
<circle cx="444.43" cy="450.32" r="4.6" fill="#3CBBFA"/>
<circle cx="635.72" cy="450.32" r="4.6" fill="#3CBBFA"/>
<circle cx="635.72" cy="459.88" r="4.6" fill="#3CBBFA"/>
<circle cx="530.51" cy="459.88" r="4.6" fill="#3CBBFA"/>
<circle cx="712.25" cy="450.32" r="4.6" fill="#3CBBFA"/>
<circle cx="702.68" cy="459.88" r="4.6" fill="#3CBBFA"/>
<circle cx="587.90" cy="593.79" r="4.6" fill="#3CBBFA"/>
<circle cx="836.59" cy="345.11" r="4.6" fill="#3CBBFA"/>
<circle cx="788.76" cy="450.32" r="4.6" fill="#3CBBFA"/>
<circle cx="788.76" cy="459.88" r="4.6" fill="#3CBBFA"/>
<circle cx="893.98" cy="450.32" r="4.6" fill="#3CBBFA"/>
<circle cx="980.07" cy="450.32" r="4.6" fill="#3CBBFA"/>
<circle cx="836.59" cy="593.79" r="4.6" fill="#3CBBFA"/>
<path d="M983.8,429.5 L983.8,441.3 L986.4,438.9 L988.6,443 L990.3,442.1 L988.3,438.1 L992.2,437.9 Z" fill="#000" stroke="#E0E0E0" stroke-width="1"/>
<rect x="987.5" y="429.5" width="3.4" height="3" fill="#000" stroke="#E8E020" stroke-width="1"/>
</svg>
<rect x="0" y="749" width="1280" height="14.5" fill="url(#gHdr)"/>
<rect x="0" y="763" width="1280" height="0.8" fill="#9A9A9A" />
<rect x="5" y="752" width="2" height="9" fill="#AAA" />
<text x="10.6" y="759.8" font-size="9.5" fill="#222" textLength="123.80" lengthAdjust="spacingAndGlyphs"  style="white-space:pre">mouse L: schSingleSelectPt()</text>
<text x="592.3" y="759.8" font-size="9.5" fill="#222" textLength="98.30" lengthAdjust="spacingAndGlyphs"  style="white-space:pre">M: schZoomFit(1.0 0.9)</text>
<text x="1172.4" y="759.8" font-size="9.5" fill="#222" textLength="99.20" lengthAdjust="spacingAndGlyphs"  style="white-space:pre">R: schHiMousePopUp()</text>
<rect x="0" y="764" width="1280" height="16" fill="#F0F0F0" />
<rect x="0" y="765" width="27" height="14.4" fill="#F5D2D2" />
<rect x="28" y="765" width="1" height="14.4" fill="#555" />
<text x="1.5" y="775.6" font-size="9.5" fill="#222" textLength="22.00" lengthAdjust="spacingAndGlyphs"  style="white-space:pre">8(11)</text>
<text x="35.6" y="775.6" font-size="9.5" fill="#222" textLength="217.40" lengthAdjust="spacingAndGlyphs"  style="white-space:pre">HIT-Kit: ams_4.10  Tech: c35b4c3  User: cheba106</text>
<rect x="1213.3" y="765" width="1" height="14.4" fill="#555" />
<text x="1219.5" y="775.6" font-size="9.5" fill="#222" textLength="47.90" lengthAdjust="spacingAndGlyphs"  style="white-space:pre">Cmd: Sel: 0</text>
<rect x="1275" y="766" width="3" height="13" fill="#999" />
<rect x="0" y="779.3" width="1280" height="1.3" fill="#444" />
<rect x="0" y="780.6" width="1280" height="19.4" fill="#EDECEB" />
<path d="M4,784 v14" stroke="#bbb" stroke-width="1" stroke-dasharray="1,1.5"/><path d="M6,784 v14" stroke="#bbb" stroke-width="1" stroke-dasharray="1,1.5"/>
<rect x="9.9" y="782.5" width="144.6" height="16" rx="2.5" fill="#F2F1F0" stroke="#A9A7A4"/>
<text x="33" y="794.5" font-size="10.5" fill="#1a1a1a" textLength="40.00" lengthAdjust="spacingAndGlyphs"  style="white-space:pre">Terminal</text>
<rect x="158.0" y="782.5" width="144.0" height="16" rx="2.5" fill="#F2F1F0" stroke="#A9A7A4"/>
<text x="180.5" y="794.5" font-size="10.5" fill="#1a1a1a" textLength="112.00" lengthAdjust="spacingAndGlyphs"  style="white-space:pre">virtuoso (on naum.ed...</text>
<rect x="306.0" y="782.5" width="143.5" height="16" rx="2.5" fill="#F2F1F0" stroke="#A9A7A4"/>
<text x="328.75" y="794.5" font-size="10.5" fill="#1a1a1a" textLength="116.75" lengthAdjust="spacingAndGlyphs"  style="white-space:pre">Cadence Library Mana...</text>
<rect x="453.5" y="782.5" width="144" height="16" rx="2.5" fill="#F2F1F0" stroke="#A9A7A4"/>
<text x="476.25" y="794.5" font-size="10.5" fill="#1a1a1a" textLength="116.25" lengthAdjust="spacingAndGlyphs"  style="white-space:pre">energyharvester (on n...</text>
<rect x="601.0" y="782.5" width="144.75" height="16" rx="2.5" fill="#C9C7C4" stroke="#A9A7A4"/>
<text x="624.5" y="794.5" font-size="10.5" fill="#1a1a1a" textLength="116.75" lengthAdjust="spacingAndGlyphs"  style="white-space:pre">osc_cell (on naum.edu...</text>
<rect x="14" y="784.5" width="12.5" height="12" rx="1.5" fill="#3a3a3a" stroke="#777"/><path d="M16.5,788 l3,2 l-3,2 M20,793 h4" stroke="#ddd" stroke-width="0.9" fill="none"/>
<rect x="163.5" y="784.5" width="10" height="12" fill="#fff" stroke="#222" stroke-width="1.2"/><path d="M171,787.5 h-3 v6 h3" stroke="#222" stroke-width="1.3" fill="none"/><rect x="168" y="785" width="4" height="1.5" fill="#C00"/>
<rect x="311.5" y="785" width="10" height="11" fill="#fff" stroke="#666" stroke-width="1"/><rect x="311.5" y="785" width="10" height="2.5" fill="#3465A4"/>
<rect x="458" y="784.5" width="12.5" height="12.5" fill="#3a3a3a"/><path d="M459,795 l10,-9 M460,789 h8 M461,796 l8,-6" stroke="#bbb" stroke-width="0.9" fill="none"/><circle cx="464" cy="791" r="2.5" fill="none" stroke="#ccc" stroke-width="0.9"/>
<rect x="606.3" y="784.5" width="12.5" height="12.5" fill="#3a3a3a"/><path d="M607.3,795 l10,-9 M608.3,789 h8 M609.3,796 l8,-6" stroke="#bbb" stroke-width="0.9" fill="none"/><circle cx="612.3" cy="791" r="2.5" fill="none" stroke="#ccc" stroke-width="0.9"/>
<rect x="1202.7" y="783" width="24.6" height="15.4" fill="#CFE0F3" />
<rect x="1202.7" y="797.6" width="24.6" height="0.8" fill="#6A8FC0" />
<rect x="1227.3" y="783" width="25.3" height="15.4" rx="2" fill="#AAA7A3"/>
<rect x="1209" y="784.5" width="12" height="12" fill="#3a3a3a"/><circle cx="1215" cy="790.5" r="2.5" fill="none" stroke="#ccc" stroke-width="0.9"/><path d="M1210,795 l10,-9" stroke="#bbb" stroke-width="0.9"/>
<path d="M1263.5,786 h14 l-1.5,13 h-11z" fill="#3C78D8" stroke="#1F4E9E" stroke-width="1"/><rect x="1263" y="784" width="15" height="3" rx="1" fill="#6FA0E8" stroke="#1F4E9E" stroke-width="0.8"/>
</svg></body></html>
